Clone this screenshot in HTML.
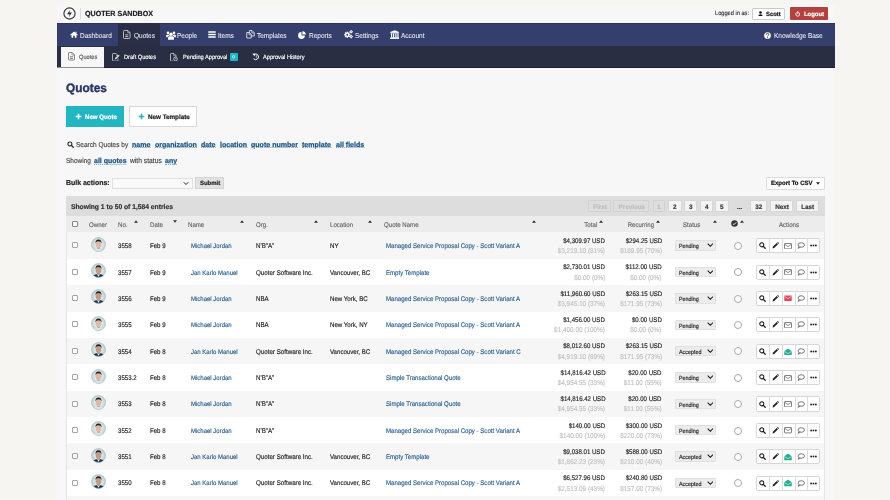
<!DOCTYPE html>
<html><head><meta charset="utf-8"><style>
html,body{margin:0;padding:0;width:890px;height:500px;overflow:hidden;background:#f6f5f1;}
body{position:relative;font-family:"Liberation Sans",sans-serif;}
.b{position:absolute;line-height:0}
.t{position:absolute;white-space:nowrap;line-height:10px;height:10px;font-size:6.1px;color:#222;-webkit-text-stroke:0.15px currentColor;text-rendering:geometricPrecision}
.bold{font-weight:bold;-webkit-text-stroke:0.2px currentColor}
.lnk{font-weight:bold;color:#1c5787;-webkit-text-stroke:0.25px currentColor}
.lnk::after{content:"";position:absolute;left:0;right:0;bottom:1.3px;border-bottom:0.8px dotted #7fa6c6}
svg{display:block}
#root{position:absolute;left:0;top:0;width:890px;height:500px;will-change:transform;filter:blur(0.3px)}
</style></head><body>
<div id="root">
<div class="b" style="left:57px;top:5px;width:778px;height:495px;background:#f7f7f7"></div>
<div class="b" style="left:62.8px;top:6.6px;width:13px;height:13px"><svg width="13" height="13" viewBox="0 0 26 26"><circle cx="13" cy="13" r="11.2" fill="none" stroke="#333" stroke-width="2.3"/><path d="M14.5 5.5 L12.5 11 L17.8 11 L11.5 20.5 L13.2 14.6 L8 14.6 Z" fill="#2a2a2a"/></svg></div>
<div class="b" style="left:80.2px;top:7.6px;width:0.7999999999999972px;height:11.799999999999999px;background:#dadada"></div>
<div class="t bold" style="left:85.00px;top:9.30px;font-size:7.42px;color:#222;letter-spacing:0.000px;transform:scaleX(0.9615);transform-origin:left center">QUOTER SANDBOX</div>
<div class="t " style="left:715.00px;top:8.80px;font-size:6.23px;color:#333;letter-spacing:0.000px;transform:scaleX(0.9091);transform-origin:left center">Logged in as:</div>
<div class="b" style="left:752px;top:7.5px;width:33px;height:12.5px;background:#fff;border:1px solid #ccc;box-sizing:border-box;border-radius:1px"></div>
<div class="b" style="left:757.5px;top:10.8px"><svg width="5" height="5.6" viewBox="0 0 10 11"><circle cx="5" cy="3" r="2.6" fill="#111"/><path d="M0.6 11 Q0.6 6.2 5 6.2 Q9.4 6.2 9.4 11Z" fill="#111"/></svg></div>
<div class="t bold" style="left:765.50px;top:9.60px;font-size:6.14px;color:#111;letter-spacing:0.000px;transform:scaleX(0.9615);transform-origin:left center">Scott</div>
<div class="b" style="left:789.7px;top:7.2px;width:38.39999999999998px;height:12.8px;background:#b3423e;border-radius:1px"></div>
<div class="b" style="left:794.8px;top:10.9px"><svg width="5.6" height="5.8" viewBox="0 0 12 12.4"><path d="M3.4 3.3 A4.3 4.3 0 1 0 8.6 3.3" fill="none" stroke="#fff" stroke-width="1.9" stroke-linecap="round"/><path d="M6 1 V5.8" stroke="#fff" stroke-width="1.9" stroke-linecap="round"/></svg></div>
<div class="t bold" style="left:803.50px;top:9.60px;font-size:6.14px;color:#fff;letter-spacing:0.000px;transform:scaleX(0.9615);transform-origin:left center">Logout</div>
<div class="b" style="left:57px;top:23px;width:778px;height:23px;background:#343f6d"></div>
<div class="b" style="left:57px;top:23px;width:778px;height:1px;background:#2c355c"></div>
<div class="b" style="left:117.8px;top:23px;width:42.000000000000014px;height:23px;background:#2a2f47"></div>
<div class="b" style="left:69.6px;top:31px"><svg width="8" height="7" viewBox="0 0 16 14"><path d="M8 0.8 L15.6 7.6 L14.4 8.8 L13 7.6 V13.6 H9.6 V9.6 H6.4 V13.6 H3 V7.6 L1.6 8.8 L0.4 7.6 Z" fill="#fff"/><rect x="11" y="1.5" width="2" height="3.5" fill="#fff"/></svg></div>
<div class="t " style="left:79.80px;top:30.90px;font-size:7.15px;color:#f0f0f4;-webkit-text-stroke:0.05px #f0f0f4;letter-spacing:0.000px;transform:scaleX(0.9091);transform-origin:left center">Dashboard</div>
<div class="b" style="left:123px;top:30px"><svg width="8" height="9" viewBox="0 0 16 18"><path d="M2.5 1 H10 L14 5 V15.5 Q14 17 12.5 17 H2.5 Q1 17 1 15.5 V2.5 Q1 1 2.5 1 Z" fill="none" stroke="#d8d8de" stroke-width="1.6"/><path d="M9.5 1.5 V5.5 H13.5" fill="none" stroke="#d8d8de" stroke-width="1.3"/><path d="M4.5 9.8 H10.5 M4.5 13.3 H10.5" stroke="#d8d8de" stroke-width="1.7"/></svg></div>
<div class="t " style="left:134.00px;top:30.90px;font-size:7.15px;color:#f0f0f4;-webkit-text-stroke:0.05px #f0f0f4;letter-spacing:0.000px;transform:scaleX(0.9091);transform-origin:left center">Quotes</div>
<div class="b" style="left:165.8px;top:30.5px"><svg width="10" height="9" viewBox="0 0 20 18"><circle cx="10" cy="6.5" r="3.4" fill="#fff"/><circle cx="4" cy="3.8" r="2.6" fill="#fff"/><circle cx="16" cy="3.8" r="2.6" fill="#fff"/><path d="M4 17.5 V13.5 Q4 10.5 7 10.5 H13 Q16 10.5 16 13.5 V17.5Z" fill="#fff"/><path d="M0.3 12.5 V9.5 Q0.3 7.3 2.5 7.3 H5.5 Q6.3 8.5 7 9.6 Q3.2 10.2 3 12.5Z M19.7 12.5 V9.5 Q19.7 7.3 17.5 7.3 H14.5 Q13.7 8.5 13 9.6 Q16.8 10.2 17 12.5Z" fill="#fff"/></svg></div>
<div class="t " style="left:176.50px;top:30.90px;font-size:7.15px;color:#f0f0f4;-webkit-text-stroke:0.05px #f0f0f4;letter-spacing:0.000px;transform:scaleX(0.9091);transform-origin:left center">People</div>
<div class="b" style="left:208px;top:31.3px"><svg width="8" height="7" viewBox="0 0 16 14"><rect x="0.5" y="0.6" width="15" height="2.8" rx="0.6" fill="#fff"/><rect x="0.5" y="5.6" width="15" height="2.8" rx="0.6" fill="#fff"/><rect x="0.5" y="10.6" width="15" height="2.8" rx="0.6" fill="#fff"/></svg></div>
<div class="t " style="left:218.30px;top:30.90px;font-size:7.15px;color:#f0f0f4;-webkit-text-stroke:0.05px #f0f0f4;letter-spacing:0.000px;transform:scaleX(0.9091);transform-origin:left center">Items</div>
<div class="b" style="left:246.4px;top:30.4px"><svg width="9" height="8.5" viewBox="0 0 18 17"><path d="M7 1 H12 L16.5 5.5 V12 H7 Z" fill="#343f6d" stroke="#fff" stroke-width="1.5" stroke-linejoin="round"/><path d="M11.5 1.3 V6 H16.2" fill="none" stroke="#fff" stroke-width="1.2"/><path d="M1.5 5 H6.5 L10.5 9 V16 H1.5 Z" fill="#343f6d" stroke="#fff" stroke-width="1.5" stroke-linejoin="round"/><path d="M6 5.3 V9.5 H10.2" fill="none" stroke="#fff" stroke-width="1.2"/></svg></div>
<div class="t " style="left:257.40px;top:30.90px;font-size:7.15px;color:#f0f0f4;-webkit-text-stroke:0.05px #f0f0f4;letter-spacing:0.000px;transform:scaleX(0.9091);transform-origin:left center">Templates</div>
<div class="b" style="left:298.4px;top:30.6px"><svg width="8" height="8" viewBox="0 0 16 16"><path d="M7 2.2 A6.8 6.8 0 1 0 13.8 9 H7 Z" fill="#fff"/><path d="M8.8 0.3 A7 7 0 0 1 15.7 7.2 H8.8Z" fill="#fff"/></svg></div>
<div class="t " style="left:309.20px;top:30.90px;font-size:7.15px;color:#f0f0f4;-webkit-text-stroke:0.05px #f0f0f4;letter-spacing:0.000px;transform:scaleX(0.9091);transform-origin:left center">Reports</div>
<div class="b" style="left:343.5px;top:30.4px"><svg width="9" height="8.5" viewBox="0 0 18 17"><g fill="#fff"><circle cx="6.5" cy="9.5" r="4.3"/><g transform="translate(6.5 9.5)"><rect x="-1.3" y="-6.2" width="2.6" height="12.4"/><rect x="-1.3" y="-6.2" width="2.6" height="12.4" transform="rotate(45)"/><rect x="-1.3" y="-6.2" width="2.6" height="12.4" transform="rotate(90)"/><rect x="-1.3" y="-6.2" width="2.6" height="12.4" transform="rotate(135)"/></g></g><circle cx="6.5" cy="9.5" r="1.8" fill="#343f6d"/><g fill="#fff"><circle cx="14.3" cy="3.6" r="2.6"/><rect x="13.5" y="0" width="1.6" height="7.2"/><rect x="10.7" y="2.8" width="7.2" height="1.6"/><circle cx="14.3" cy="13.2" r="2.6"/><rect x="13.5" y="9.6" width="1.6" height="7.2"/><rect x="10.7" y="12.4" width="7.2" height="1.6"/></g><circle cx="14.3" cy="3.6" r="1" fill="#343f6d"/><circle cx="14.3" cy="13.2" r="1" fill="#343f6d"/></svg></div>
<div class="t " style="left:354.50px;top:30.90px;font-size:7.15px;color:#f0f0f4;-webkit-text-stroke:0.05px #f0f0f4;letter-spacing:0.000px;transform:scaleX(0.9091);transform-origin:left center">Settings</div>
<div class="b" style="left:389.8px;top:30px"><svg width="9.5" height="9" viewBox="0 0 19 18"><path d="M9.5 0.5 L18.5 4.2 V5.3 H0.5 V4.2Z" fill="#fff"/><rect x="0.5" y="5.3" width="18" height="1.3" fill="#fff"/><rect x="2" y="6.6" width="2.4" height="7.6" fill="#fff"/><rect x="6" y="6.6" width="2.4" height="7.6" fill="#fff"/><rect x="10.6" y="6.6" width="2.4" height="7.6" fill="#fff"/><rect x="14.6" y="6.6" width="2.4" height="7.6" fill="#fff"/><rect x="1" y="14.2" width="17" height="1.6" fill="#fff"/><rect x="0" y="15.8" width="19" height="2" fill="#fff"/></svg></div>
<div class="t " style="left:400.90px;top:30.90px;font-size:7.15px;color:#f0f0f4;-webkit-text-stroke:0.05px #f0f0f4;letter-spacing:0.000px;transform:scaleX(0.9091);transform-origin:left center">Account</div>
<div class="b" style="left:763.6px;top:31.8px"><svg width="7" height="7" viewBox="0 0 14 14"><circle cx="7" cy="7" r="6.7" fill="#fff"/><path d="M4.6 5.4 Q4.6 2.9 7 2.9 Q9.5 2.9 9.5 5 Q9.5 6.3 8 7 Q7.1 7.5 7.1 8.7" fill="none" stroke="#343f6d" stroke-width="1.9"/><circle cx="7.1" cy="10.9" r="1.1" fill="#343f6d"/></svg></div>
<div class="t " style="left:773.70px;top:30.90px;font-size:7.15px;color:#f0f0f4;-webkit-text-stroke:0.05px #f0f0f4;letter-spacing:0.000px;transform:scaleX(0.9091);transform-origin:left center">Knowledge Base</div>
<div class="b" style="left:57px;top:46px;width:778px;height:21.5px;background:#292e42"></div>
<div class="b" style="left:57px;top:66.5px;width:778px;height:1.0px;background:#1c1f30"></div>
<div class="b" style="left:61.4px;top:46.5px;width:42.300000000000004px;height:20.099999999999994px;background:#f7f7f7"></div>
<div class="b" style="left:57px;top:66.6px;width:47px;height:1.0px;background:#8e919c"></div>
<div class="b" style="left:68px;top:52.4px"><svg width="7" height="8.5" viewBox="0 0 14 17"><path d="M2.3 1 H8.5 L13 5.5 V14.7 Q13 16 11.7 16 H2.3 Q1 16 1 14.7 V2.3 Q1 1 2.3 1Z" fill="none" stroke="#666" stroke-width="1.5"/><path d="M8 1.3 V6 H12.7" fill="none" stroke="#666" stroke-width="1.2"/><path d="M4 9.5 H10 M4 12.8 H10" stroke="#666" stroke-width="1.6"/></svg></div>
<div class="t " style="left:78.90px;top:53.00px;font-size:6.22px;color:#555;letter-spacing:0.000px;transform:scaleX(0.9091);transform-origin:left center">Quotes</div>
<div class="b" style="left:111.6px;top:52.5px"><svg width="8" height="8.5" viewBox="0 0 16 17"><path d="M9.5 4 V5.5 L12 5.5 M12 11 V14.7 Q12 16 10.7 16 H2.3 Q1 16 1 14.7 V2.3 Q1 1 2.3 1 H8 L12 5 V6" fill="none" stroke="#ddd" stroke-width="1.5"/><path d="M5.5 13 L6.3 10 L13 3.3 L15.2 5.5 L8.5 12.2Z" fill="#ddd"/></svg></div>
<div class="t " style="left:123.60px;top:53.00px;font-size:6.22px;color:#fff;letter-spacing:0.000px;transform:scaleX(0.9091);transform-origin:left center">Draft Quotes</div>
<div class="b" style="left:170.2px;top:52.5px"><svg width="8" height="8.5" viewBox="0 0 16 17"><path d="M6 16 H2.3 Q1 16 1 14.7 V2.3 Q1 1 2.3 1 H8 L12 5 V8.5" fill="none" stroke="#ddd" stroke-width="1.5"/><path d="M7.5 1.3 V5.5 H11.7" fill="none" stroke="#ddd" stroke-width="1.1"/><circle cx="11" cy="12" r="3.7" fill="none" stroke="#ddd" stroke-width="1.5"/><path d="M11 10.3 V12.2 H12.6" fill="none" stroke="#ddd" stroke-width="1"/></svg></div>
<div class="t " style="left:182.60px;top:53.00px;font-size:6.22px;color:#fff;letter-spacing:0.000px;transform:scaleX(0.9091);transform-origin:left center">Pending Approval</div>
<div class="b" style="left:230.1px;top:53px;width:7.700000000000017px;height:8px;background:#1fb6c6;border-radius:1px"></div>
<div class="b" style="left:232.4px;top:55.2px"><svg width="3.2" height="3.6" viewBox="0 0 6 7"><ellipse cx="3" cy="3.5" rx="2.1" ry="2.6" fill="none" stroke="#fff" stroke-width="1.3"/></svg></div>
<div class="b" style="left:251.8px;top:53px"><svg width="7.5" height="7.5" viewBox="0 0 15 15"><path d="M4 3.2 A5.6 5.6 0 1 1 3.2 11.3" fill="none" stroke="#fff" stroke-width="2"/><path d="M0.6 1.6 L6.2 1.2 L5.2 6.6Z" fill="#fff"/><path d="M8.5 4.5 V8 L10.5 9.5" fill="none" stroke="#fff" stroke-width="1.4"/></svg></div>
<div class="t " style="left:263.00px;top:53.00px;font-size:6.22px;color:#fff;letter-spacing:0.000px;transform:scaleX(0.9091);transform-origin:left center">Approval History</div>
<div class="t bold" style="left:65.80px;top:82.90px;font-size:12.20px;color:#2a3567;-webkit-text-stroke:0.4px #2a3567;letter-spacing:0.000px;transform:scaleX(0.9754);transform-origin:left center">Quotes</div>
<div class="b" style="left:66px;top:106px;width:58px;height:21px;background:#22b6c2"></div>
<div class="b" style="left:75px;top:113px"><svg width="7" height="7" viewBox="0 0 14 14"><path d="M7 1.3 V12.7 M1.3 7 H12.7" stroke="#fff" stroke-width="3.2"/></svg></div>
<div class="t bold" style="left:84.80px;top:112.80px;font-size:6.38px;color:#fff;letter-spacing:0.000px;transform:scaleX(0.9615);transform-origin:left center">New Quote</div>
<div class="b" style="left:129.3px;top:106px;width:67.39999999999998px;height:21px;background:#fff;border:1px solid #d8d8d8;box-sizing:border-box"></div>
<div class="b" style="left:137.5px;top:113px"><svg width="7" height="7" viewBox="0 0 14 14"><path d="M7 1.3 V12.7 M1.3 7 H12.7" stroke="#22b6c2" stroke-width="3.2"/></svg></div>
<div class="t bold" style="left:147.80px;top:112.80px;font-size:6.54px;color:#222;letter-spacing:0.000px;transform:scaleX(0.9615);transform-origin:left center">New Template</div>
<div class="b" style="left:66.6px;top:141.4px"><svg width="7" height="7" viewBox="0 0 14 14"><circle cx="5.8" cy="5.8" r="4" fill="none" stroke="#222" stroke-width="2.1"/><path d="M8.8 8.8 L12.6 12.6" stroke="#222" stroke-width="2.6" stroke-linecap="round"/></svg></div>
<div class="t " style="left:76.30px;top:139.50px;font-size:7.18px;color:#444;letter-spacing:0.000px;transform:scaleX(0.9091);transform-origin:left center">Search Quotes by</div>
<div class="t lnk" style="left:131.90px;top:139.50px;font-size:7.19px;letter-spacing:0.000px;transform:scaleX(0.9804);transform-origin:left center">name</div>
<div class="t lnk" style="left:154.50px;top:139.50px;font-size:7.19px;letter-spacing:0.000px;transform:scaleX(0.9804);transform-origin:left center">organization</div>
<div class="t lnk" style="left:200.90px;top:139.50px;font-size:7.19px;letter-spacing:0.000px;transform:scaleX(0.9804);transform-origin:left center">date</div>
<div class="t lnk" style="left:220.10px;top:139.50px;font-size:7.19px;letter-spacing:0.000px;transform:scaleX(0.9804);transform-origin:left center">location</div>
<div class="t lnk" style="left:250.50px;top:139.50px;font-size:7.19px;letter-spacing:0.000px;transform:scaleX(0.9804);transform-origin:left center">quote number</div>
<div class="t lnk" style="left:301.70px;top:139.50px;font-size:7.19px;letter-spacing:0.000px;transform:scaleX(0.9804);transform-origin:left center">template</div>
<div class="t lnk" style="left:336.20px;top:139.50px;font-size:7.19px;letter-spacing:0.000px;transform:scaleX(0.9804);transform-origin:left center">all fields</div>
<div class="t " style="left:65.50px;top:156.30px;font-size:7.14px;color:#444;letter-spacing:0.000px;transform:scaleX(0.9091);transform-origin:left center">Showing</div>
<div class="t lnk" style="left:94.10px;top:156.30px;font-size:7.12px;letter-spacing:0.000px;transform:scaleX(0.9804);transform-origin:left center">all quotes</div>
<div class="t " style="left:129.70px;top:156.30px;font-size:7.43px;color:#444;letter-spacing:0.000px;transform:scaleX(0.9091);transform-origin:left center">with status</div>
<div class="t lnk" style="left:165.30px;top:156.30px;font-size:7.12px;letter-spacing:0.000px;transform:scaleX(0.9804);transform-origin:left center">any</div>
<div class="t bold" style="left:66.00px;top:178.00px;font-size:7.22px;color:#222;letter-spacing:0.000px;transform:scaleX(0.9615);transform-origin:left center">Bulk actions:</div>
<div class="b" style="left:112.3px;top:177.6px;width:80.39999999999999px;height:11.300000000000011px;background:#f9f9f9;border:1px solid #e0e0e0;box-sizing:border-box"></div>
<div class="b" style="left:183px;top:181px"><svg width="6" height="5" viewBox="0 0 12 10"><path d="M1.5 2.5 L6 7 L10.5 2.5" fill="none" stroke="#222" stroke-width="2"/></svg></div>
<div class="b" style="left:195px;top:176.7px;width:29.19999999999999px;height:12.600000000000023px;background:#e2e2e2;border:1px solid #d5d5d5;box-sizing:border-box"></div>
<div class="t bold" style="left:199.50px;top:179.00px;font-size:6.20px;color:#222;letter-spacing:0.000px;transform:scaleX(0.9615);transform-origin:left center">Submit</div>
<div class="b" style="left:766.4px;top:177px;width:58.80000000000007px;height:12.5px;background:#fff;border:1px solid #dcdcdc;box-sizing:border-box;border-radius:1px"></div>
<div class="t bold" style="left:770.80px;top:179.20px;font-size:6.24px;color:#111;letter-spacing:0.000px;transform:scaleX(0.9615);transform-origin:left center">Export To CSV</div>
<div class="b" style="left:815.5px;top:182px"><svg width="4" height="3" viewBox="0 0 8 5"><path d="M0 0 H8 L4 5Z" fill="#222"/></svg></div>
<div class="b" style="left:66.4px;top:196px;width:758.4px;height:304px;background:#f5f5f5;border-left:1px solid #e6e6e6;border-right:1px solid #e6e6e6;box-sizing:border-box"></div>
<div class="b" style="left:66.4px;top:196px;width:758.4px;height:19.5px;background:#dddddd"></div>
<div class="t bold" style="left:71.20px;top:202.50px;font-size:6.99px;color:#333;letter-spacing:0.000px;transform:scaleX(0.9615);transform-origin:left center">Showing 1 to 50 of 1,584 entries</div>
<div class="b" style="left:587.9px;top:199.8px;width:22.899999999999977px;height:12.699999999999989px;background:#dedede;border:1px solid #d2d2d2;box-sizing:border-box;border-radius:1px"></div>
<div class="t bold" style="left:592.52px;top:202.60px;font-size:6.55px;color:#bdbdbd;letter-spacing:0.000px;transform:scaleX(0.9615);transform-origin:center center">First</div>
<div class="b" style="left:613.2px;top:199.8px;width:36.09999999999991px;height:12.699999999999989px;background:#dedede;border:1px solid #d2d2d2;box-sizing:border-box;border-radius:1px"></div>
<div class="t bold" style="left:617.94px;top:202.60px;font-size:6.55px;color:#bdbdbd;letter-spacing:0.000px;transform:scaleX(0.9615);transform-origin:center center">Previous</div>
<div class="b" style="left:652.5px;top:199.8px;width:12.799999999999955px;height:12.699999999999989px;background:#dedede;border:1px solid #d2d2d2;box-sizing:border-box;border-radius:1px"></div>
<div class="t bold" style="left:657.15px;top:202.60px;font-size:6.55px;color:#bdbdbd;letter-spacing:0.000px;transform:scaleX(0.9615);transform-origin:center center">1</div>
<div class="b" style="left:668.0px;top:199.8px;width:13.600000000000023px;height:12.699999999999989px;background:#f3f3f3;border:1px solid #d6d6d6;box-sizing:border-box;border-radius:1px"></div>
<div class="t bold" style="left:673.05px;top:202.60px;font-size:6.55px;color:#3a3a3a;letter-spacing:0.000px;transform:scaleX(0.9615);transform-origin:center center">2</div>
<div class="b" style="left:684.0px;top:199.8px;width:13.100000000000023px;height:12.699999999999989px;background:#f3f3f3;border:1px solid #d6d6d6;box-sizing:border-box;border-radius:1px"></div>
<div class="t bold" style="left:688.80px;top:202.60px;font-size:6.55px;color:#3a3a3a;letter-spacing:0.000px;transform:scaleX(0.9615);transform-origin:center center">3</div>
<div class="b" style="left:699.5px;top:199.8px;width:13.600000000000023px;height:12.699999999999989px;background:#f3f3f3;border:1px solid #d6d6d6;box-sizing:border-box;border-radius:1px"></div>
<div class="t bold" style="left:704.55px;top:202.60px;font-size:6.55px;color:#3a3a3a;letter-spacing:0.000px;transform:scaleX(0.9615);transform-origin:center center">4</div>
<div class="b" style="left:715.2px;top:199.8px;width:13.599999999999909px;height:12.699999999999989px;background:#f3f3f3;border:1px solid #d6d6d6;box-sizing:border-box;border-radius:1px"></div>
<div class="t bold" style="left:720.25px;top:202.60px;font-size:6.55px;color:#3a3a3a;letter-spacing:0.000px;transform:scaleX(0.9615);transform-origin:center center">5</div>
<div class="b" style="left:750.0px;top:199.8px;width:17.299999999999955px;height:12.699999999999989px;background:#f3f3f3;border:1px solid #d6d6d6;box-sizing:border-box;border-radius:1px"></div>
<div class="t bold" style="left:755.15px;top:202.60px;font-size:6.55px;color:#3a3a3a;letter-spacing:0.000px;transform:scaleX(0.9615);transform-origin:center center">32</div>
<div class="b" style="left:769.9px;top:199.8px;width:23.5px;height:12.699999999999989px;background:#f3f3f3;border:1px solid #d6d6d6;box-sizing:border-box;border-radius:1px"></div>
<div class="t bold" style="left:774.82px;top:202.60px;font-size:6.55px;color:#3a3a3a;letter-spacing:0.000px;transform:scaleX(0.9615);transform-origin:center center">Next</div>
<div class="b" style="left:796.4px;top:199.8px;width:22.300000000000068px;height:12.699999999999989px;background:#f3f3f3;border:1px solid #d6d6d6;box-sizing:border-box;border-radius:1px"></div>
<div class="t bold" style="left:801.07px;top:202.60px;font-size:6.55px;color:#3a3a3a;letter-spacing:0.000px;transform:scaleX(0.9615);transform-origin:center center">Last</div>
<div class="t bold" style="left:736.50px;top:202.50px;font-size:6.55px;color:#333;letter-spacing:0.000px;transform:scaleX(0.9615);transform-origin:left center">...</div>
<div class="b" style="left:66.4px;top:215.5px;width:758.4px;height:17.099999999999994px;background:#ececec"></div>
<div class="b" style="left:72px;top:220.8px;width:6px;height:6.0px;background:#fff;border:1px solid #888;box-sizing:border-box;border-radius:1px"></div>
<div class="t " style="left:89.30px;top:221.10px;color:#666;font-size:6.71px;letter-spacing:0.000px;transform:scaleX(0.9091);transform-origin:left center">Owner</div>
<div class="t " style="left:118.30px;top:221.10px;color:#666;font-size:6.71px;letter-spacing:0.000px;transform:scaleX(0.9091);transform-origin:left center">No.</div>
<div class="t " style="left:149.70px;top:221.10px;color:#666;font-size:6.71px;letter-spacing:0.000px;transform:scaleX(0.9091);transform-origin:left center">Date</div>
<div class="t " style="left:188.00px;top:221.10px;color:#666;font-size:6.71px;letter-spacing:0.000px;transform:scaleX(0.9091);transform-origin:left center">Name</div>
<div class="t " style="left:255.50px;top:221.10px;color:#666;font-size:6.71px;letter-spacing:0.000px;transform:scaleX(0.9091);transform-origin:left center">Org.</div>
<div class="t " style="left:330.00px;top:221.10px;color:#666;font-size:6.71px;letter-spacing:0.000px;transform:scaleX(0.9091);transform-origin:left center">Location</div>
<div class="t " style="left:384.00px;top:221.10px;color:#666;font-size:6.71px;letter-spacing:0.000px;transform:scaleX(0.9091);transform-origin:left center">Quote Name</div>
<div class="t " style="right:292.50px;top:221.10px;color:#666;font-size:6.71px;letter-spacing:0.000px;transform:scaleX(0.9091);transform-origin:right center">Total</div>
<div class="t " style="right:235.60px;top:221.10px;color:#666;font-size:6.71px;letter-spacing:0.000px;transform:scaleX(0.9091);transform-origin:right center">Recurring</div>
<div class="t " style="left:682.70px;top:221.10px;color:#666;font-size:6.71px;letter-spacing:0.000px;transform:scaleX(0.9091);transform-origin:left center">Status</div>
<div class="t " style="left:778.20px;top:221.10px;color:#666;font-size:6.71px;letter-spacing:0.000px;transform:scaleX(0.9091);transform-origin:center center">Actions</div>
<div class="b" style="left:134.2px;top:219.9px"><svg width="4" height="3" viewBox="0 0 8 5"><path d="M0 5 H8 L4 0Z" fill="#333"/></svg></div>
<div class="b" style="left:172.6px;top:219.9px"><svg width="4" height="3" viewBox="0 0 8 5"><path d="M0 0 H8 L4 5Z" fill="#333"/></svg></div>
<div class="b" style="left:240.3px;top:219.9px"><svg width="4" height="3" viewBox="0 0 8 5"><path d="M0 5 H8 L4 0Z" fill="#333"/></svg></div>
<div class="b" style="left:314px;top:219.9px"><svg width="4" height="3" viewBox="0 0 8 5"><path d="M0 5 H8 L4 0Z" fill="#333"/></svg></div>
<div class="b" style="left:367.9px;top:219.9px"><svg width="4" height="3" viewBox="0 0 8 5"><path d="M0 5 H8 L4 0Z" fill="#333"/></svg></div>
<div class="b" style="left:532.4px;top:219.9px"><svg width="4" height="3" viewBox="0 0 8 5"><path d="M0 5 H8 L4 0Z" fill="#333"/></svg></div>
<div class="b" style="left:598.7px;top:219.9px"><svg width="4" height="3" viewBox="0 0 8 5"><path d="M0 5 H8 L4 0Z" fill="#333"/></svg></div>
<div class="b" style="left:655.5px;top:219.9px"><svg width="4" height="3" viewBox="0 0 8 5"><path d="M0 5 H8 L4 0Z" fill="#333"/></svg></div>
<div class="b" style="left:713px;top:219.9px"><svg width="4" height="3" viewBox="0 0 8 5"><path d="M0 5 H8 L4 0Z" fill="#333"/></svg></div>
<div class="b" style="left:740.4px;top:219.9px"><svg width="4" height="3" viewBox="0 0 8 5"><path d="M0 5 H8 L4 0Z" fill="#333"/></svg></div>
<div class="b" style="left:730.5px;top:220px"><svg width="7" height="7" viewBox="0 0 14 14"><circle cx="7" cy="7" r="6.5" fill="#333"/><path d="M3.8 7.2 L6 9.4 L10.3 4.8" fill="none" stroke="#fff" stroke-width="1.8"/></svg></div>
<div class="b" style="left:67.4px;top:232.45px;width:756.4px;height:26.370000000000005px;background:#f6f6f6"></div>
<div class="b" style="left:72px;top:242.34999999999997px;width:6px;height:6.0px;background:#fff;border:1px solid #a5a5a5;box-sizing:border-box;border-radius:1px"></div>
<div class="b" style="left:90.9px;top:236.74999999999997px"><svg width="15" height="15" viewBox="0 0 30 30"><defs><radialGradient id="bg0m" cx="50%" cy="50%" r="50%"><stop offset="0.35" stop-color="#f0f2f2"/><stop offset="1" stop-color="#c4cacc"/></radialGradient><clipPath id="cp0m"><circle cx="15" cy="15" r="13.8"/></clipPath></defs><circle cx="15" cy="15" r="14" fill="url(#bg0m)"/><g clip-path="url(#cp0m)"><path d="M3 31 Q4 24 11 23 H19 Q26 24 27 31Z" fill="#dde4ec"/><rect x="12.5" y="19" width="5" height="5" fill="#cfa890"/><ellipse cx="15" cy="14.3" rx="6" ry="7.4" fill="#dcbba6"/><path d="M8.9 12.5 Q8.5 5 15 4.8 Q21.5 5 21.1 12.5 Q20.3 8.8 15 8.6 Q9.7 8.8 8.9 12.5Z" fill="#2a2420"/></g><circle cx="15" cy="15" r="14" fill="none" stroke="#8ecbd0" stroke-width="1.3"/></svg></div>
<div class="t " style="left:118.30px;top:242.15px;color:#222;font-size:6.71px;letter-spacing:0.000px;transform:scaleX(0.9091);transform-origin:left center">3558</div>
<div class="t " style="left:149.70px;top:242.15px;color:#222;font-size:6.71px;letter-spacing:0.000px;transform:scaleX(0.9091);transform-origin:left center">Feb 9</div>
<div class="t " style="left:190.80px;top:242.15px;color:#2a5f8f;font-size:6.60px;letter-spacing:0.000px;transform:scaleX(0.9091);transform-origin:left center">Michael Jordan</div>
<div class="t " style="left:255.50px;top:242.15px;color:#222;font-size:6.82px;letter-spacing:0.000px;transform:scaleX(0.9091);transform-origin:left center">N&#39;B"A"</div>
<div class="t " style="left:329.60px;top:242.15px;color:#222;font-size:6.71px;letter-spacing:0.000px;transform:scaleX(0.9091);transform-origin:left center">NY</div>
<div class="t " style="left:386.40px;top:242.15px;color:#2a5f8f;font-size:6.69px;letter-spacing:0.000px;transform:scaleX(0.9091);transform-origin:left center">Managed Service Proposal Copy - Scott Variant A</div>
<div class="t " style="right:284.90px;top:236.95px;color:#222;font-size:6.71px;letter-spacing:0.000px;transform:scaleX(0.9091);transform-origin:right center">$4,309.97 USD</div>
<div class="t " style="right:284.90px;top:247.25px;color:#c2c2c2;font-size:7.04px;letter-spacing:0.000px;transform:scaleX(0.9091);transform-origin:right center">$3,219.10 (81%)</div>
<div class="t " style="right:228.20px;top:236.95px;color:#222;font-size:6.71px;letter-spacing:0.000px;transform:scaleX(0.9091);transform-origin:right center">$294.25 USD</div>
<div class="t " style="right:228.20px;top:247.25px;color:#c2c2c2;font-size:7.04px;letter-spacing:0.000px;transform:scaleX(0.9091);transform-origin:right center">$189.95 (70%)</div>
<div class="b" style="left:675px;top:240.45px;width:40.799999999999955px;height:10.399999999999977px;background:#ececec;border:1px solid #e0e0e0;box-sizing:border-box;border-radius:1px"></div>
<div class="t " style="left:679.00px;top:242.45px;color:#1a1a1a;font-size:6.00px;letter-spacing:0.000px;transform:scaleX(0.9000);transform-origin:left center">Pending</div>
<div class="b" style="left:706.7px;top:243.34999999999997px"><svg width="6.6" height="4.2" viewBox="0 0 13 8"><path d="M1.3 1.3 L6.5 6.3 L11.7 1.3" fill="none" stroke="#151515" stroke-width="2"/></svg></div>
<div class="b" style="left:733.9px;top:241.95px;width:8px;height:8px;border:1px solid #aaa;border-radius:50%;box-sizing:border-box;background:#fff"></div>
<div class="b" style="left:756.3px;top:238.24999999999997px;width:63.80000000000007px;height:15.099999999999994px;background:#fff;border:1px solid #d6d6d6;box-sizing:border-box;border-radius:1.5px"></div>
<div class="b" style="left:769.06px;top:238.24999999999997px;width:0.7000000000000455px;height:15.099999999999994px;background:#dcdcdc"></div>
<div class="b" style="left:781.8199999999999px;top:238.24999999999997px;width:0.7000000000000455px;height:15.099999999999994px;background:#dcdcdc"></div>
<div class="b" style="left:794.5799999999999px;top:238.24999999999997px;width:0.7000000000000455px;height:15.099999999999994px;background:#dcdcdc"></div>
<div class="b" style="left:807.3399999999999px;top:238.24999999999997px;width:0.7000000000000455px;height:15.099999999999994px;background:#dcdcdc"></div>
<div class="b" style="left:759.18px;top:242.34999999999997px;line-height:0"><svg width="7" height="7" viewBox="0 0 14 14"><circle cx="5.6" cy="5.6" r="4.1" fill="none" stroke="#1a1a1a" stroke-width="2.1"/><path d="M8.7 8.7 L12.4 12.4" stroke="#1a1a1a" stroke-width="2.6" stroke-linecap="round"/></svg></div>
<div class="b" style="left:771.9399999999999px;top:242.34999999999997px;line-height:0"><svg width="7" height="7" viewBox="0 0 14 14"><path d="M1.2 12.8 L1.8 9.6 L9.4 2 L12 4.6 L4.4 12.2 Z" fill="#1f1f1f"/><path d="M10.2 1.2 L11 0.4 Q11.6 -0.1 12.2 0.5 L13.5 1.8 Q14.1 2.4 13.6 3 L12.8 3.8Z" fill="#1f1f1f"/></svg></div>
<div class="b" style="left:784.1999999999999px;top:242.64999999999998px;line-height:0"><svg width="8" height="6.4" viewBox="0 0 16 12.8"><rect x="1" y="1" width="14" height="10.8" rx="1.4" fill="none" stroke="#555" stroke-width="1.5"/><path d="M1.5 2.5 L8 7.3 L14.5 2.5" fill="none" stroke="#555" stroke-width="1.4"/></svg></div>
<div class="b" style="left:796.9599999999999px;top:242.34999999999997px;line-height:0"><svg width="8" height="7" viewBox="0 0 16 14"><ellipse cx="8.5" cy="6" rx="6.4" ry="4.5" fill="none" stroke="#333" stroke-width="1.3"/><path d="M4 9.2 L2.2 12.8 L6.8 10.3" fill="#fff" stroke="#333" stroke-width="1.2"/></svg></div>
<div class="b" style="left:810.2199999999999px;top:244.34999999999997px;line-height:0"><svg width="7" height="3" viewBox="0 0 14 6"><rect x="0.6" y="1.4" width="3.4" height="3.2" fill="#1f1f1f"/><rect x="5.3" y="1.4" width="3.4" height="3.2" fill="#1f1f1f"/><rect x="10" y="1.4" width="3.4" height="3.2" fill="#1f1f1f"/></svg></div>
<div class="b" style="left:67.4px;top:258.82px;width:756.4px;height:26.370000000000005px;background:#ffffff"></div>
<div class="b" style="left:72px;top:268.71999999999997px;width:6px;height:6.0px;background:#fff;border:1px solid #a5a5a5;box-sizing:border-box;border-radius:1px"></div>
<div class="b" style="left:90.9px;top:263.12px"><svg width="15" height="15" viewBox="0 0 30 30"><defs><radialGradient id="bg1j" cx="50%" cy="50%" r="50%"><stop offset="0.35" stop-color="#eef0f1"/><stop offset="1" stop-color="#c0c6c9"/></radialGradient><clipPath id="cp1j"><circle cx="15" cy="15" r="13.8"/></clipPath></defs><circle cx="15" cy="15" r="14" fill="url(#bg1j)"/><g clip-path="url(#cp1j)"><path d="M2 31 Q3 24 10.5 22.5 H19.5 Q27 24 28 31Z" fill="#1c2d4e"/><path d="M12 22.5 L15 28 L18 22.5Z" fill="#e9eef3"/><rect x="12.5" y="18.5" width="5" height="4.5" fill="#b08870"/><ellipse cx="15" cy="14" rx="5.9" ry="7.3" fill="#c29c84"/><path d="M9 12 Q8.6 4.6 15 4.5 Q21.4 4.6 21 12 Q20.2 8.2 15 8 Q9.8 8.2 9 12Z" fill="#2a211c"/></g><circle cx="15" cy="15" r="14" fill="none" stroke="#8ecbd0" stroke-width="1.3"/></svg></div>
<div class="t " style="left:118.30px;top:268.52px;color:#222;font-size:6.71px;letter-spacing:0.000px;transform:scaleX(0.9091);transform-origin:left center">3557</div>
<div class="t " style="left:149.70px;top:268.52px;color:#222;font-size:6.71px;letter-spacing:0.000px;transform:scaleX(0.9091);transform-origin:left center">Feb 9</div>
<div class="t " style="left:190.80px;top:268.52px;color:#2a5f8f;font-size:6.60px;letter-spacing:0.000px;transform:scaleX(0.9091);transform-origin:left center">Jan Karlo Manuel</div>
<div class="t " style="left:255.50px;top:268.52px;color:#222;font-size:6.82px;letter-spacing:0.000px;transform:scaleX(0.9091);transform-origin:left center">Quoter Software Inc.</div>
<div class="t " style="left:329.60px;top:268.52px;color:#222;font-size:6.71px;letter-spacing:0.000px;transform:scaleX(0.9091);transform-origin:left center">Vancouver, BC</div>
<div class="t " style="left:386.40px;top:268.52px;color:#2a5f8f;font-size:6.69px;letter-spacing:0.000px;transform:scaleX(0.9091);transform-origin:left center">Empty Template</div>
<div class="t " style="right:284.90px;top:263.32px;color:#222;font-size:6.71px;letter-spacing:0.000px;transform:scaleX(0.9091);transform-origin:right center">$2,730.01 USD</div>
<div class="t " style="right:284.90px;top:273.62px;color:#c2c2c2;font-size:7.04px;letter-spacing:0.000px;transform:scaleX(0.9091);transform-origin:right center">$0.00 (0%)</div>
<div class="t " style="right:228.20px;top:263.32px;color:#222;font-size:6.71px;letter-spacing:0.000px;transform:scaleX(0.9091);transform-origin:right center">$112.00 USD</div>
<div class="t " style="right:228.20px;top:273.62px;color:#c2c2c2;font-size:7.04px;letter-spacing:0.000px;transform:scaleX(0.9091);transform-origin:right center">$0.00 (0%)</div>
<div class="b" style="left:675px;top:266.82px;width:40.799999999999955px;height:10.399999999999977px;background:#ececec;border:1px solid #e0e0e0;box-sizing:border-box;border-radius:1px"></div>
<div class="t " style="left:679.00px;top:268.82px;color:#1a1a1a;font-size:6.00px;letter-spacing:0.000px;transform:scaleX(0.9000);transform-origin:left center">Pending</div>
<div class="b" style="left:706.7px;top:269.71999999999997px"><svg width="6.6" height="4.2" viewBox="0 0 13 8"><path d="M1.3 1.3 L6.5 6.3 L11.7 1.3" fill="none" stroke="#151515" stroke-width="2"/></svg></div>
<div class="b" style="left:733.9px;top:268.32px;width:8px;height:8px;border:1px solid #aaa;border-radius:50%;box-sizing:border-box;background:#fff"></div>
<div class="b" style="left:756.3px;top:264.62px;width:63.80000000000007px;height:15.099999999999966px;background:#fff;border:1px solid #d6d6d6;box-sizing:border-box;border-radius:1.5px"></div>
<div class="b" style="left:769.06px;top:264.62px;width:0.7000000000000455px;height:15.099999999999966px;background:#dcdcdc"></div>
<div class="b" style="left:781.8199999999999px;top:264.62px;width:0.7000000000000455px;height:15.099999999999966px;background:#dcdcdc"></div>
<div class="b" style="left:794.5799999999999px;top:264.62px;width:0.7000000000000455px;height:15.099999999999966px;background:#dcdcdc"></div>
<div class="b" style="left:807.3399999999999px;top:264.62px;width:0.7000000000000455px;height:15.099999999999966px;background:#dcdcdc"></div>
<div class="b" style="left:759.18px;top:268.71999999999997px;line-height:0"><svg width="7" height="7" viewBox="0 0 14 14"><circle cx="5.6" cy="5.6" r="4.1" fill="none" stroke="#1a1a1a" stroke-width="2.1"/><path d="M8.7 8.7 L12.4 12.4" stroke="#1a1a1a" stroke-width="2.6" stroke-linecap="round"/></svg></div>
<div class="b" style="left:771.9399999999999px;top:268.71999999999997px;line-height:0"><svg width="7" height="7" viewBox="0 0 14 14"><path d="M1.2 12.8 L1.8 9.6 L9.4 2 L12 4.6 L4.4 12.2 Z" fill="#1f1f1f"/><path d="M10.2 1.2 L11 0.4 Q11.6 -0.1 12.2 0.5 L13.5 1.8 Q14.1 2.4 13.6 3 L12.8 3.8Z" fill="#1f1f1f"/></svg></div>
<div class="b" style="left:784.1999999999999px;top:269.02px;line-height:0"><svg width="8" height="6.4" viewBox="0 0 16 12.8"><rect x="1" y="1" width="14" height="10.8" rx="1.4" fill="none" stroke="#555" stroke-width="1.5"/><path d="M1.5 2.5 L8 7.3 L14.5 2.5" fill="none" stroke="#555" stroke-width="1.4"/></svg></div>
<div class="b" style="left:796.9599999999999px;top:268.71999999999997px;line-height:0"><svg width="8" height="7" viewBox="0 0 16 14"><ellipse cx="8.5" cy="6" rx="6.4" ry="4.5" fill="none" stroke="#333" stroke-width="1.3"/><path d="M4 9.2 L2.2 12.8 L6.8 10.3" fill="#fff" stroke="#333" stroke-width="1.2"/></svg></div>
<div class="b" style="left:810.2199999999999px;top:270.71999999999997px;line-height:0"><svg width="7" height="3" viewBox="0 0 14 6"><rect x="0.6" y="1.4" width="3.4" height="3.2" fill="#1f1f1f"/><rect x="5.3" y="1.4" width="3.4" height="3.2" fill="#1f1f1f"/><rect x="10" y="1.4" width="3.4" height="3.2" fill="#1f1f1f"/></svg></div>
<div class="b" style="left:67.4px;top:285.19px;width:756.4px;height:26.370000000000005px;background:#f6f6f6"></div>
<div class="b" style="left:72px;top:295.09px;width:6px;height:6.0px;background:#fff;border:1px solid #a5a5a5;box-sizing:border-box;border-radius:1px"></div>
<div class="b" style="left:90.9px;top:289.49px"><svg width="15" height="15" viewBox="0 0 30 30"><defs><radialGradient id="bg2j" cx="50%" cy="50%" r="50%"><stop offset="0.35" stop-color="#eef0f1"/><stop offset="1" stop-color="#c0c6c9"/></radialGradient><clipPath id="cp2j"><circle cx="15" cy="15" r="13.8"/></clipPath></defs><circle cx="15" cy="15" r="14" fill="url(#bg2j)"/><g clip-path="url(#cp2j)"><path d="M2 31 Q3 24 10.5 22.5 H19.5 Q27 24 28 31Z" fill="#1c2d4e"/><path d="M12 22.5 L15 28 L18 22.5Z" fill="#e9eef3"/><rect x="12.5" y="18.5" width="5" height="4.5" fill="#b08870"/><ellipse cx="15" cy="14" rx="5.9" ry="7.3" fill="#c29c84"/><path d="M9 12 Q8.6 4.6 15 4.5 Q21.4 4.6 21 12 Q20.2 8.2 15 8 Q9.8 8.2 9 12Z" fill="#2a211c"/></g><circle cx="15" cy="15" r="14" fill="none" stroke="#8ecbd0" stroke-width="1.3"/></svg></div>
<div class="t " style="left:118.30px;top:294.89px;color:#222;font-size:6.71px;letter-spacing:0.000px;transform:scaleX(0.9091);transform-origin:left center">3556</div>
<div class="t " style="left:149.70px;top:294.89px;color:#222;font-size:6.71px;letter-spacing:0.000px;transform:scaleX(0.9091);transform-origin:left center">Feb 9</div>
<div class="t " style="left:190.80px;top:294.89px;color:#2a5f8f;font-size:6.60px;letter-spacing:0.000px;transform:scaleX(0.9091);transform-origin:left center">Michael Jordan</div>
<div class="t " style="left:255.50px;top:294.89px;color:#222;font-size:6.82px;letter-spacing:0.000px;transform:scaleX(0.9091);transform-origin:left center">NBA</div>
<div class="t " style="left:329.60px;top:294.89px;color:#222;font-size:6.71px;letter-spacing:0.000px;transform:scaleX(0.9091);transform-origin:left center">New York, BC</div>
<div class="t " style="left:386.40px;top:294.89px;color:#2a5f8f;font-size:6.69px;letter-spacing:0.000px;transform:scaleX(0.9091);transform-origin:left center">Managed Service Proposal Copy - Scott Variant A</div>
<div class="t " style="right:284.90px;top:289.69px;color:#222;font-size:6.71px;letter-spacing:0.000px;transform:scaleX(0.9091);transform-origin:right center">$11,960.60 USD</div>
<div class="t " style="right:284.90px;top:299.99px;color:#c2c2c2;font-size:7.04px;letter-spacing:0.000px;transform:scaleX(0.9091);transform-origin:right center">$3,945.10 (37%)</div>
<div class="t " style="right:228.20px;top:289.69px;color:#222;font-size:6.71px;letter-spacing:0.000px;transform:scaleX(0.9091);transform-origin:right center">$263.15 USD</div>
<div class="t " style="right:228.20px;top:299.99px;color:#c2c2c2;font-size:7.04px;letter-spacing:0.000px;transform:scaleX(0.9091);transform-origin:right center">$171.95 (73%)</div>
<div class="b" style="left:675px;top:293.19px;width:40.799999999999955px;height:10.399999999999977px;background:#ececec;border:1px solid #e0e0e0;box-sizing:border-box;border-radius:1px"></div>
<div class="t " style="left:679.00px;top:295.19px;color:#1a1a1a;font-size:6.00px;letter-spacing:0.000px;transform:scaleX(0.9000);transform-origin:left center">Pending</div>
<div class="b" style="left:706.7px;top:296.09px"><svg width="6.6" height="4.2" viewBox="0 0 13 8"><path d="M1.3 1.3 L6.5 6.3 L11.7 1.3" fill="none" stroke="#151515" stroke-width="2"/></svg></div>
<div class="b" style="left:733.9px;top:294.69px;width:8px;height:8px;border:1px solid #aaa;border-radius:50%;box-sizing:border-box;background:#fff"></div>
<div class="b" style="left:756.3px;top:290.99px;width:63.80000000000007px;height:15.099999999999966px;background:#fff;border:1px solid #d6d6d6;box-sizing:border-box;border-radius:1.5px"></div>
<div class="b" style="left:769.06px;top:290.99px;width:0.7000000000000455px;height:15.099999999999966px;background:#dcdcdc"></div>
<div class="b" style="left:781.8199999999999px;top:290.99px;width:0.7000000000000455px;height:15.099999999999966px;background:#dcdcdc"></div>
<div class="b" style="left:794.5799999999999px;top:290.99px;width:0.7000000000000455px;height:15.099999999999966px;background:#dcdcdc"></div>
<div class="b" style="left:807.3399999999999px;top:290.99px;width:0.7000000000000455px;height:15.099999999999966px;background:#dcdcdc"></div>
<div class="b" style="left:759.18px;top:295.09px;line-height:0"><svg width="7" height="7" viewBox="0 0 14 14"><circle cx="5.6" cy="5.6" r="4.1" fill="none" stroke="#1a1a1a" stroke-width="2.1"/><path d="M8.7 8.7 L12.4 12.4" stroke="#1a1a1a" stroke-width="2.6" stroke-linecap="round"/></svg></div>
<div class="b" style="left:771.9399999999999px;top:295.09px;line-height:0"><svg width="7" height="7" viewBox="0 0 14 14"><path d="M1.2 12.8 L1.8 9.6 L9.4 2 L12 4.6 L4.4 12.2 Z" fill="#1f1f1f"/><path d="M10.2 1.2 L11 0.4 Q11.6 -0.1 12.2 0.5 L13.5 1.8 Q14.1 2.4 13.6 3 L12.8 3.8Z" fill="#1f1f1f"/></svg></div>
<div class="b" style="left:784.1999999999999px;top:295.39px;line-height:0"><svg width="8" height="6.4" viewBox="0 0 16 12.8"><rect x="0.5" y="0.8" width="15" height="11.4" rx="1" fill="#e5475b"/><path d="M1 2.5 L8 7.3 L15 2.5" fill="none" stroke="#fff" stroke-width="1.1"/></svg></div>
<div class="b" style="left:796.9599999999999px;top:295.09px;line-height:0"><svg width="8" height="7" viewBox="0 0 16 14"><ellipse cx="8.5" cy="6" rx="6.4" ry="4.5" fill="none" stroke="#333" stroke-width="1.3"/><path d="M4 9.2 L2.2 12.8 L6.8 10.3" fill="#fff" stroke="#333" stroke-width="1.2"/></svg></div>
<div class="b" style="left:810.2199999999999px;top:297.09px;line-height:0"><svg width="7" height="3" viewBox="0 0 14 6"><rect x="0.6" y="1.4" width="3.4" height="3.2" fill="#1f1f1f"/><rect x="5.3" y="1.4" width="3.4" height="3.2" fill="#1f1f1f"/><rect x="10" y="1.4" width="3.4" height="3.2" fill="#1f1f1f"/></svg></div>
<div class="b" style="left:67.4px;top:311.56px;width:756.4px;height:26.370000000000005px;background:#ffffff"></div>
<div class="b" style="left:72px;top:321.46px;width:6px;height:6.0px;background:#fff;border:1px solid #a5a5a5;box-sizing:border-box;border-radius:1px"></div>
<div class="b" style="left:90.9px;top:315.86px"><svg width="15" height="15" viewBox="0 0 30 30"><defs><radialGradient id="bg3m" cx="50%" cy="50%" r="50%"><stop offset="0.35" stop-color="#f0f2f2"/><stop offset="1" stop-color="#c4cacc"/></radialGradient><clipPath id="cp3m"><circle cx="15" cy="15" r="13.8"/></clipPath></defs><circle cx="15" cy="15" r="14" fill="url(#bg3m)"/><g clip-path="url(#cp3m)"><path d="M3 31 Q4 24 11 23 H19 Q26 24 27 31Z" fill="#dde4ec"/><rect x="12.5" y="19" width="5" height="5" fill="#cfa890"/><ellipse cx="15" cy="14.3" rx="6" ry="7.4" fill="#dcbba6"/><path d="M8.9 12.5 Q8.5 5 15 4.8 Q21.5 5 21.1 12.5 Q20.3 8.8 15 8.6 Q9.7 8.8 8.9 12.5Z" fill="#2a2420"/></g><circle cx="15" cy="15" r="14" fill="none" stroke="#8ecbd0" stroke-width="1.3"/></svg></div>
<div class="t " style="left:118.30px;top:321.26px;color:#222;font-size:6.71px;letter-spacing:0.000px;transform:scaleX(0.9091);transform-origin:left center">3555</div>
<div class="t " style="left:149.70px;top:321.26px;color:#222;font-size:6.71px;letter-spacing:0.000px;transform:scaleX(0.9091);transform-origin:left center">Feb 9</div>
<div class="t " style="left:190.80px;top:321.26px;color:#2a5f8f;font-size:6.60px;letter-spacing:0.000px;transform:scaleX(0.9091);transform-origin:left center">Michael Jordan</div>
<div class="t " style="left:255.50px;top:321.26px;color:#222;font-size:6.82px;letter-spacing:0.000px;transform:scaleX(0.9091);transform-origin:left center">NBA</div>
<div class="t " style="left:329.60px;top:321.26px;color:#222;font-size:6.71px;letter-spacing:0.000px;transform:scaleX(0.9091);transform-origin:left center">New York, NY</div>
<div class="t " style="left:386.40px;top:321.26px;color:#2a5f8f;font-size:6.69px;letter-spacing:0.000px;transform:scaleX(0.9091);transform-origin:left center">Managed Service Proposal Copy - Scott Variant A</div>
<div class="t " style="right:284.90px;top:316.06px;color:#222;font-size:6.71px;letter-spacing:0.000px;transform:scaleX(0.9091);transform-origin:right center">$1,456.00 USD</div>
<div class="t " style="right:284.90px;top:326.36px;color:#c2c2c2;font-size:7.04px;letter-spacing:0.000px;transform:scaleX(0.9091);transform-origin:right center">$1,400.00 (100%)</div>
<div class="t " style="right:228.20px;top:316.06px;color:#222;font-size:6.71px;letter-spacing:0.000px;transform:scaleX(0.9091);transform-origin:right center">$0.00 USD</div>
<div class="t " style="right:228.20px;top:326.36px;color:#c2c2c2;font-size:7.04px;letter-spacing:0.000px;transform:scaleX(0.9091);transform-origin:right center">$0.00 (0%)</div>
<div class="b" style="left:675px;top:319.56px;width:40.799999999999955px;height:10.399999999999977px;background:#ececec;border:1px solid #e0e0e0;box-sizing:border-box;border-radius:1px"></div>
<div class="t " style="left:679.00px;top:321.56px;color:#1a1a1a;font-size:6.00px;letter-spacing:0.000px;transform:scaleX(0.9000);transform-origin:left center">Pending</div>
<div class="b" style="left:706.7px;top:322.46px"><svg width="6.6" height="4.2" viewBox="0 0 13 8"><path d="M1.3 1.3 L6.5 6.3 L11.7 1.3" fill="none" stroke="#151515" stroke-width="2"/></svg></div>
<div class="b" style="left:733.9px;top:321.06px;width:8px;height:8px;border:1px solid #aaa;border-radius:50%;box-sizing:border-box;background:#fff"></div>
<div class="b" style="left:756.3px;top:317.36px;width:63.80000000000007px;height:15.099999999999966px;background:#fff;border:1px solid #d6d6d6;box-sizing:border-box;border-radius:1.5px"></div>
<div class="b" style="left:769.06px;top:317.36px;width:0.7000000000000455px;height:15.099999999999966px;background:#dcdcdc"></div>
<div class="b" style="left:781.8199999999999px;top:317.36px;width:0.7000000000000455px;height:15.099999999999966px;background:#dcdcdc"></div>
<div class="b" style="left:794.5799999999999px;top:317.36px;width:0.7000000000000455px;height:15.099999999999966px;background:#dcdcdc"></div>
<div class="b" style="left:807.3399999999999px;top:317.36px;width:0.7000000000000455px;height:15.099999999999966px;background:#dcdcdc"></div>
<div class="b" style="left:759.18px;top:321.46px;line-height:0"><svg width="7" height="7" viewBox="0 0 14 14"><circle cx="5.6" cy="5.6" r="4.1" fill="none" stroke="#1a1a1a" stroke-width="2.1"/><path d="M8.7 8.7 L12.4 12.4" stroke="#1a1a1a" stroke-width="2.6" stroke-linecap="round"/></svg></div>
<div class="b" style="left:771.9399999999999px;top:321.46px;line-height:0"><svg width="7" height="7" viewBox="0 0 14 14"><path d="M1.2 12.8 L1.8 9.6 L9.4 2 L12 4.6 L4.4 12.2 Z" fill="#1f1f1f"/><path d="M10.2 1.2 L11 0.4 Q11.6 -0.1 12.2 0.5 L13.5 1.8 Q14.1 2.4 13.6 3 L12.8 3.8Z" fill="#1f1f1f"/></svg></div>
<div class="b" style="left:784.1999999999999px;top:321.76px;line-height:0"><svg width="8" height="6.4" viewBox="0 0 16 12.8"><rect x="1" y="1" width="14" height="10.8" rx="1.4" fill="none" stroke="#555" stroke-width="1.5"/><path d="M1.5 2.5 L8 7.3 L14.5 2.5" fill="none" stroke="#555" stroke-width="1.4"/></svg></div>
<div class="b" style="left:796.9599999999999px;top:321.46px;line-height:0"><svg width="8" height="7" viewBox="0 0 16 14"><ellipse cx="8.5" cy="6" rx="6.4" ry="4.5" fill="none" stroke="#333" stroke-width="1.3"/><path d="M4 9.2 L2.2 12.8 L6.8 10.3" fill="#fff" stroke="#333" stroke-width="1.2"/></svg></div>
<div class="b" style="left:810.2199999999999px;top:323.46px;line-height:0"><svg width="7" height="3" viewBox="0 0 14 6"><rect x="0.6" y="1.4" width="3.4" height="3.2" fill="#1f1f1f"/><rect x="5.3" y="1.4" width="3.4" height="3.2" fill="#1f1f1f"/><rect x="10" y="1.4" width="3.4" height="3.2" fill="#1f1f1f"/></svg></div>
<div class="b" style="left:67.4px;top:337.93px;width:756.4px;height:26.370000000000005px;background:#f6f6f6"></div>
<div class="b" style="left:72px;top:347.83px;width:6px;height:6.0px;background:#fff;border:1px solid #a5a5a5;box-sizing:border-box;border-radius:1px"></div>
<div class="b" style="left:90.9px;top:342.23px"><svg width="15" height="15" viewBox="0 0 30 30"><defs><radialGradient id="bg4j" cx="50%" cy="50%" r="50%"><stop offset="0.35" stop-color="#eef0f1"/><stop offset="1" stop-color="#c0c6c9"/></radialGradient><clipPath id="cp4j"><circle cx="15" cy="15" r="13.8"/></clipPath></defs><circle cx="15" cy="15" r="14" fill="url(#bg4j)"/><g clip-path="url(#cp4j)"><path d="M2 31 Q3 24 10.5 22.5 H19.5 Q27 24 28 31Z" fill="#1c2d4e"/><path d="M12 22.5 L15 28 L18 22.5Z" fill="#e9eef3"/><rect x="12.5" y="18.5" width="5" height="4.5" fill="#b08870"/><ellipse cx="15" cy="14" rx="5.9" ry="7.3" fill="#c29c84"/><path d="M9 12 Q8.6 4.6 15 4.5 Q21.4 4.6 21 12 Q20.2 8.2 15 8 Q9.8 8.2 9 12Z" fill="#2a211c"/></g><circle cx="15" cy="15" r="14" fill="none" stroke="#8ecbd0" stroke-width="1.3"/></svg></div>
<div class="t " style="left:118.30px;top:347.63px;color:#222;font-size:6.71px;letter-spacing:0.000px;transform:scaleX(0.9091);transform-origin:left center">3554</div>
<div class="t " style="left:149.70px;top:347.63px;color:#222;font-size:6.71px;letter-spacing:0.000px;transform:scaleX(0.9091);transform-origin:left center">Feb 8</div>
<div class="t " style="left:190.80px;top:347.63px;color:#2a5f8f;font-size:6.60px;letter-spacing:0.000px;transform:scaleX(0.9091);transform-origin:left center">Jan Karlo Manuel</div>
<div class="t " style="left:255.50px;top:347.63px;color:#222;font-size:6.82px;letter-spacing:0.000px;transform:scaleX(0.9091);transform-origin:left center">Quoter Software Inc.</div>
<div class="t " style="left:329.60px;top:347.63px;color:#222;font-size:6.71px;letter-spacing:0.000px;transform:scaleX(0.9091);transform-origin:left center">Vancouver, BC</div>
<div class="t " style="left:386.40px;top:347.63px;color:#2a5f8f;font-size:6.69px;letter-spacing:0.000px;transform:scaleX(0.9091);transform-origin:left center">Managed Service Proposal Copy - Scott Variant C</div>
<div class="t " style="right:284.90px;top:342.43px;color:#222;font-size:6.71px;letter-spacing:0.000px;transform:scaleX(0.9091);transform-origin:right center">$8,012.60 USD</div>
<div class="t " style="right:284.90px;top:352.73px;color:#c2c2c2;font-size:7.04px;letter-spacing:0.000px;transform:scaleX(0.9091);transform-origin:right center">$4,919.10 (69%)</div>
<div class="t " style="right:228.20px;top:342.43px;color:#222;font-size:6.71px;letter-spacing:0.000px;transform:scaleX(0.9091);transform-origin:right center">$263.15 USD</div>
<div class="t " style="right:228.20px;top:352.73px;color:#c2c2c2;font-size:7.04px;letter-spacing:0.000px;transform:scaleX(0.9091);transform-origin:right center">$171.95 (73%)</div>
<div class="b" style="left:675px;top:345.93px;width:40.799999999999955px;height:10.399999999999977px;background:#ececec;border:1px solid #e0e0e0;box-sizing:border-box;border-radius:1px"></div>
<div class="t " style="left:679.00px;top:347.93px;color:#1a1a1a;font-size:6.00px;letter-spacing:0.000px;transform:scaleX(0.9000);transform-origin:left center">Accepted</div>
<div class="b" style="left:706.7px;top:348.83px"><svg width="6.6" height="4.2" viewBox="0 0 13 8"><path d="M1.3 1.3 L6.5 6.3 L11.7 1.3" fill="none" stroke="#151515" stroke-width="2"/></svg></div>
<div class="b" style="left:733.9px;top:347.43px;width:8px;height:8px;border:1px solid #aaa;border-radius:50%;box-sizing:border-box;background:#fff"></div>
<div class="b" style="left:756.3px;top:343.73px;width:63.80000000000007px;height:15.099999999999966px;background:#fff;border:1px solid #d6d6d6;box-sizing:border-box;border-radius:1.5px"></div>
<div class="b" style="left:769.06px;top:343.73px;width:0.7000000000000455px;height:15.099999999999966px;background:#dcdcdc"></div>
<div class="b" style="left:781.8199999999999px;top:343.73px;width:0.7000000000000455px;height:15.099999999999966px;background:#dcdcdc"></div>
<div class="b" style="left:794.5799999999999px;top:343.73px;width:0.7000000000000455px;height:15.099999999999966px;background:#dcdcdc"></div>
<div class="b" style="left:807.3399999999999px;top:343.73px;width:0.7000000000000455px;height:15.099999999999966px;background:#dcdcdc"></div>
<div class="b" style="left:759.18px;top:347.83px;line-height:0"><svg width="7" height="7" viewBox="0 0 14 14"><circle cx="5.6" cy="5.6" r="4.1" fill="none" stroke="#1a1a1a" stroke-width="2.1"/><path d="M8.7 8.7 L12.4 12.4" stroke="#1a1a1a" stroke-width="2.6" stroke-linecap="round"/></svg></div>
<div class="b" style="left:771.9399999999999px;top:347.83px;line-height:0"><svg width="7" height="7" viewBox="0 0 14 14"><path d="M1.2 12.8 L1.8 9.6 L9.4 2 L12 4.6 L4.4 12.2 Z" fill="#1f1f1f"/><path d="M10.2 1.2 L11 0.4 Q11.6 -0.1 12.2 0.5 L13.5 1.8 Q14.1 2.4 13.6 3 L12.8 3.8Z" fill="#1f1f1f"/></svg></div>
<div class="b" style="left:784.1999999999999px;top:347.58px;line-height:0"><svg width="8" height="7.5" viewBox="0 0 16 15"><path d="M0.5 6.5 L8 1 L15.5 6.5 V14.5 H0.5 Z" fill="#22b08f"/><path d="M0.8 7 L8 11.3 L15.2 7" fill="none" stroke="#fff" stroke-width="1.1"/></svg></div>
<div class="b" style="left:796.9599999999999px;top:347.83px;line-height:0"><svg width="8" height="7" viewBox="0 0 16 14"><ellipse cx="8.5" cy="6" rx="6.4" ry="4.5" fill="none" stroke="#333" stroke-width="1.3"/><path d="M4 9.2 L2.2 12.8 L6.8 10.3" fill="#fff" stroke="#333" stroke-width="1.2"/></svg></div>
<div class="b" style="left:810.2199999999999px;top:349.83px;line-height:0"><svg width="7" height="3" viewBox="0 0 14 6"><rect x="0.6" y="1.4" width="3.4" height="3.2" fill="#1f1f1f"/><rect x="5.3" y="1.4" width="3.4" height="3.2" fill="#1f1f1f"/><rect x="10" y="1.4" width="3.4" height="3.2" fill="#1f1f1f"/></svg></div>
<div class="b" style="left:67.4px;top:364.29999999999995px;width:756.4px;height:26.370000000000005px;background:#ffffff"></div>
<div class="b" style="left:72px;top:374.19999999999993px;width:6px;height:6.0px;background:#fff;border:1px solid #a5a5a5;box-sizing:border-box;border-radius:1px"></div>
<div class="b" style="left:90.9px;top:368.59999999999997px"><svg width="15" height="15" viewBox="0 0 30 30"><defs><radialGradient id="bg5m" cx="50%" cy="50%" r="50%"><stop offset="0.35" stop-color="#f0f2f2"/><stop offset="1" stop-color="#c4cacc"/></radialGradient><clipPath id="cp5m"><circle cx="15" cy="15" r="13.8"/></clipPath></defs><circle cx="15" cy="15" r="14" fill="url(#bg5m)"/><g clip-path="url(#cp5m)"><path d="M3 31 Q4 24 11 23 H19 Q26 24 27 31Z" fill="#dde4ec"/><rect x="12.5" y="19" width="5" height="5" fill="#cfa890"/><ellipse cx="15" cy="14.3" rx="6" ry="7.4" fill="#dcbba6"/><path d="M8.9 12.5 Q8.5 5 15 4.8 Q21.5 5 21.1 12.5 Q20.3 8.8 15 8.6 Q9.7 8.8 8.9 12.5Z" fill="#2a2420"/></g><circle cx="15" cy="15" r="14" fill="none" stroke="#8ecbd0" stroke-width="1.3"/></svg></div>
<div class="t " style="left:118.30px;top:374.00px;color:#222;font-size:6.71px;letter-spacing:0.000px;transform:scaleX(0.9091);transform-origin:left center">3553.2</div>
<div class="t " style="left:149.70px;top:374.00px;color:#222;font-size:6.71px;letter-spacing:0.000px;transform:scaleX(0.9091);transform-origin:left center">Feb 8</div>
<div class="t " style="left:190.80px;top:374.00px;color:#2a5f8f;font-size:6.60px;letter-spacing:0.000px;transform:scaleX(0.9091);transform-origin:left center">Michael Jordan</div>
<div class="t " style="left:255.50px;top:374.00px;color:#222;font-size:6.82px;letter-spacing:0.000px;transform:scaleX(0.9091);transform-origin:left center">N&#39;B"A"</div>
<div class="t " style="left:386.40px;top:374.00px;color:#2a5f8f;font-size:6.69px;letter-spacing:0.000px;transform:scaleX(0.9091);transform-origin:left center">Simple Transactional Quote</div>
<div class="t " style="right:284.90px;top:368.80px;color:#222;font-size:6.71px;letter-spacing:0.000px;transform:scaleX(0.9091);transform-origin:right center">$14,816.42 USD</div>
<div class="t " style="right:284.90px;top:379.10px;color:#c2c2c2;font-size:7.04px;letter-spacing:0.000px;transform:scaleX(0.9091);transform-origin:right center">$4,954.55 (33%)</div>
<div class="t " style="right:228.20px;top:368.80px;color:#222;font-size:6.71px;letter-spacing:0.000px;transform:scaleX(0.9091);transform-origin:right center">$20.00 USD</div>
<div class="t " style="right:228.20px;top:379.10px;color:#c2c2c2;font-size:7.04px;letter-spacing:0.000px;transform:scaleX(0.9091);transform-origin:right center">$11.00 (55%)</div>
<div class="b" style="left:675px;top:372.29999999999995px;width:40.799999999999955px;height:10.399999999999977px;background:#ececec;border:1px solid #e0e0e0;box-sizing:border-box;border-radius:1px"></div>
<div class="t " style="left:679.00px;top:374.30px;color:#1a1a1a;font-size:6.00px;letter-spacing:0.000px;transform:scaleX(0.9000);transform-origin:left center">Pending</div>
<div class="b" style="left:706.7px;top:375.19999999999993px"><svg width="6.6" height="4.2" viewBox="0 0 13 8"><path d="M1.3 1.3 L6.5 6.3 L11.7 1.3" fill="none" stroke="#151515" stroke-width="2"/></svg></div>
<div class="b" style="left:733.9px;top:373.79999999999995px;width:8px;height:8px;border:1px solid #aaa;border-radius:50%;box-sizing:border-box;background:#fff"></div>
<div class="b" style="left:756.3px;top:370.09999999999997px;width:63.80000000000007px;height:15.099999999999966px;background:#fff;border:1px solid #d6d6d6;box-sizing:border-box;border-radius:1.5px"></div>
<div class="b" style="left:769.06px;top:370.09999999999997px;width:0.7000000000000455px;height:15.099999999999966px;background:#dcdcdc"></div>
<div class="b" style="left:781.8199999999999px;top:370.09999999999997px;width:0.7000000000000455px;height:15.099999999999966px;background:#dcdcdc"></div>
<div class="b" style="left:794.5799999999999px;top:370.09999999999997px;width:0.7000000000000455px;height:15.099999999999966px;background:#dcdcdc"></div>
<div class="b" style="left:807.3399999999999px;top:370.09999999999997px;width:0.7000000000000455px;height:15.099999999999966px;background:#dcdcdc"></div>
<div class="b" style="left:759.18px;top:374.19999999999993px;line-height:0"><svg width="7" height="7" viewBox="0 0 14 14"><circle cx="5.6" cy="5.6" r="4.1" fill="none" stroke="#1a1a1a" stroke-width="2.1"/><path d="M8.7 8.7 L12.4 12.4" stroke="#1a1a1a" stroke-width="2.6" stroke-linecap="round"/></svg></div>
<div class="b" style="left:771.9399999999999px;top:374.19999999999993px;line-height:0"><svg width="7" height="7" viewBox="0 0 14 14"><path d="M1.2 12.8 L1.8 9.6 L9.4 2 L12 4.6 L4.4 12.2 Z" fill="#1f1f1f"/><path d="M10.2 1.2 L11 0.4 Q11.6 -0.1 12.2 0.5 L13.5 1.8 Q14.1 2.4 13.6 3 L12.8 3.8Z" fill="#1f1f1f"/></svg></div>
<div class="b" style="left:784.1999999999999px;top:374.49999999999994px;line-height:0"><svg width="8" height="6.4" viewBox="0 0 16 12.8"><rect x="1" y="1" width="14" height="10.8" rx="1.4" fill="none" stroke="#555" stroke-width="1.5"/><path d="M1.5 2.5 L8 7.3 L14.5 2.5" fill="none" stroke="#555" stroke-width="1.4"/></svg></div>
<div class="b" style="left:796.9599999999999px;top:374.19999999999993px;line-height:0"><svg width="8" height="7" viewBox="0 0 16 14"><ellipse cx="8.5" cy="6" rx="6.4" ry="4.5" fill="none" stroke="#333" stroke-width="1.3"/><path d="M4 9.2 L2.2 12.8 L6.8 10.3" fill="#fff" stroke="#333" stroke-width="1.2"/></svg></div>
<div class="b" style="left:810.2199999999999px;top:376.19999999999993px;line-height:0"><svg width="7" height="3" viewBox="0 0 14 6"><rect x="0.6" y="1.4" width="3.4" height="3.2" fill="#1f1f1f"/><rect x="5.3" y="1.4" width="3.4" height="3.2" fill="#1f1f1f"/><rect x="10" y="1.4" width="3.4" height="3.2" fill="#1f1f1f"/></svg></div>
<div class="b" style="left:67.4px;top:390.66999999999996px;width:756.4px;height:26.370000000000005px;background:#f6f6f6"></div>
<div class="b" style="left:72px;top:400.56999999999994px;width:6px;height:6.0px;background:#fff;border:1px solid #a5a5a5;box-sizing:border-box;border-radius:1px"></div>
<div class="b" style="left:90.9px;top:394.96999999999997px"><svg width="15" height="15" viewBox="0 0 30 30"><defs><radialGradient id="bg6m" cx="50%" cy="50%" r="50%"><stop offset="0.35" stop-color="#f0f2f2"/><stop offset="1" stop-color="#c4cacc"/></radialGradient><clipPath id="cp6m"><circle cx="15" cy="15" r="13.8"/></clipPath></defs><circle cx="15" cy="15" r="14" fill="url(#bg6m)"/><g clip-path="url(#cp6m)"><path d="M3 31 Q4 24 11 23 H19 Q26 24 27 31Z" fill="#dde4ec"/><rect x="12.5" y="19" width="5" height="5" fill="#cfa890"/><ellipse cx="15" cy="14.3" rx="6" ry="7.4" fill="#dcbba6"/><path d="M8.9 12.5 Q8.5 5 15 4.8 Q21.5 5 21.1 12.5 Q20.3 8.8 15 8.6 Q9.7 8.8 8.9 12.5Z" fill="#2a2420"/></g><circle cx="15" cy="15" r="14" fill="none" stroke="#8ecbd0" stroke-width="1.3"/></svg></div>
<div class="t " style="left:118.30px;top:400.37px;color:#222;font-size:6.71px;letter-spacing:0.000px;transform:scaleX(0.9091);transform-origin:left center">3553</div>
<div class="t " style="left:149.70px;top:400.37px;color:#222;font-size:6.71px;letter-spacing:0.000px;transform:scaleX(0.9091);transform-origin:left center">Feb 8</div>
<div class="t " style="left:190.80px;top:400.37px;color:#2a5f8f;font-size:6.60px;letter-spacing:0.000px;transform:scaleX(0.9091);transform-origin:left center">Michael Jordan</div>
<div class="t " style="left:255.50px;top:400.37px;color:#222;font-size:6.82px;letter-spacing:0.000px;transform:scaleX(0.9091);transform-origin:left center">N&#39;B"A"</div>
<div class="t " style="left:386.40px;top:400.37px;color:#2a5f8f;font-size:6.69px;letter-spacing:0.000px;transform:scaleX(0.9091);transform-origin:left center">Simple Transactional Quote</div>
<div class="t " style="right:284.90px;top:395.17px;color:#222;font-size:6.71px;letter-spacing:0.000px;transform:scaleX(0.9091);transform-origin:right center">$14,816.42 USD</div>
<div class="t " style="right:284.90px;top:405.47px;color:#c2c2c2;font-size:7.04px;letter-spacing:0.000px;transform:scaleX(0.9091);transform-origin:right center">$4,954.55 (33%)</div>
<div class="t " style="right:228.20px;top:395.17px;color:#222;font-size:6.71px;letter-spacing:0.000px;transform:scaleX(0.9091);transform-origin:right center">$20.00 USD</div>
<div class="t " style="right:228.20px;top:405.47px;color:#c2c2c2;font-size:7.04px;letter-spacing:0.000px;transform:scaleX(0.9091);transform-origin:right center">$11.00 (55%)</div>
<div class="b" style="left:675px;top:398.66999999999996px;width:40.799999999999955px;height:10.399999999999977px;background:#ececec;border:1px solid #e0e0e0;box-sizing:border-box;border-radius:1px"></div>
<div class="t " style="left:679.00px;top:400.67px;color:#1a1a1a;font-size:6.00px;letter-spacing:0.000px;transform:scaleX(0.9000);transform-origin:left center">Pending</div>
<div class="b" style="left:706.7px;top:401.56999999999994px"><svg width="6.6" height="4.2" viewBox="0 0 13 8"><path d="M1.3 1.3 L6.5 6.3 L11.7 1.3" fill="none" stroke="#151515" stroke-width="2"/></svg></div>
<div class="b" style="left:733.9px;top:400.16999999999996px;width:8px;height:8px;border:1px solid #aaa;border-radius:50%;box-sizing:border-box;background:#fff"></div>
<div class="b" style="left:756.3px;top:396.46999999999997px;width:63.80000000000007px;height:15.099999999999966px;background:#fff;border:1px solid #d6d6d6;box-sizing:border-box;border-radius:1.5px"></div>
<div class="b" style="left:769.06px;top:396.46999999999997px;width:0.7000000000000455px;height:15.099999999999966px;background:#dcdcdc"></div>
<div class="b" style="left:781.8199999999999px;top:396.46999999999997px;width:0.7000000000000455px;height:15.099999999999966px;background:#dcdcdc"></div>
<div class="b" style="left:794.5799999999999px;top:396.46999999999997px;width:0.7000000000000455px;height:15.099999999999966px;background:#dcdcdc"></div>
<div class="b" style="left:807.3399999999999px;top:396.46999999999997px;width:0.7000000000000455px;height:15.099999999999966px;background:#dcdcdc"></div>
<div class="b" style="left:759.18px;top:400.56999999999994px;line-height:0"><svg width="7" height="7" viewBox="0 0 14 14"><circle cx="5.6" cy="5.6" r="4.1" fill="none" stroke="#1a1a1a" stroke-width="2.1"/><path d="M8.7 8.7 L12.4 12.4" stroke="#1a1a1a" stroke-width="2.6" stroke-linecap="round"/></svg></div>
<div class="b" style="left:771.9399999999999px;top:400.56999999999994px;line-height:0"><svg width="7" height="7" viewBox="0 0 14 14"><path d="M1.2 12.8 L1.8 9.6 L9.4 2 L12 4.6 L4.4 12.2 Z" fill="#1f1f1f"/><path d="M10.2 1.2 L11 0.4 Q11.6 -0.1 12.2 0.5 L13.5 1.8 Q14.1 2.4 13.6 3 L12.8 3.8Z" fill="#1f1f1f"/></svg></div>
<div class="b" style="left:784.1999999999999px;top:400.86999999999995px;line-height:0"><svg width="8" height="6.4" viewBox="0 0 16 12.8"><rect x="1" y="1" width="14" height="10.8" rx="1.4" fill="none" stroke="#555" stroke-width="1.5"/><path d="M1.5 2.5 L8 7.3 L14.5 2.5" fill="none" stroke="#555" stroke-width="1.4"/></svg></div>
<div class="b" style="left:796.9599999999999px;top:400.56999999999994px;line-height:0"><svg width="8" height="7" viewBox="0 0 16 14"><ellipse cx="8.5" cy="6" rx="6.4" ry="4.5" fill="none" stroke="#333" stroke-width="1.3"/><path d="M4 9.2 L2.2 12.8 L6.8 10.3" fill="#fff" stroke="#333" stroke-width="1.2"/></svg></div>
<div class="b" style="left:810.2199999999999px;top:402.56999999999994px;line-height:0"><svg width="7" height="3" viewBox="0 0 14 6"><rect x="0.6" y="1.4" width="3.4" height="3.2" fill="#1f1f1f"/><rect x="5.3" y="1.4" width="3.4" height="3.2" fill="#1f1f1f"/><rect x="10" y="1.4" width="3.4" height="3.2" fill="#1f1f1f"/></svg></div>
<div class="b" style="left:67.4px;top:417.03999999999996px;width:756.4px;height:26.370000000000005px;background:#ffffff"></div>
<div class="b" style="left:72px;top:426.93999999999994px;width:6px;height:6.0px;background:#fff;border:1px solid #a5a5a5;box-sizing:border-box;border-radius:1px"></div>
<div class="b" style="left:90.9px;top:421.34px"><svg width="15" height="15" viewBox="0 0 30 30"><defs><radialGradient id="bg7m" cx="50%" cy="50%" r="50%"><stop offset="0.35" stop-color="#f0f2f2"/><stop offset="1" stop-color="#c4cacc"/></radialGradient><clipPath id="cp7m"><circle cx="15" cy="15" r="13.8"/></clipPath></defs><circle cx="15" cy="15" r="14" fill="url(#bg7m)"/><g clip-path="url(#cp7m)"><path d="M3 31 Q4 24 11 23 H19 Q26 24 27 31Z" fill="#dde4ec"/><rect x="12.5" y="19" width="5" height="5" fill="#cfa890"/><ellipse cx="15" cy="14.3" rx="6" ry="7.4" fill="#dcbba6"/><path d="M8.9 12.5 Q8.5 5 15 4.8 Q21.5 5 21.1 12.5 Q20.3 8.8 15 8.6 Q9.7 8.8 8.9 12.5Z" fill="#2a2420"/></g><circle cx="15" cy="15" r="14" fill="none" stroke="#8ecbd0" stroke-width="1.3"/></svg></div>
<div class="t " style="left:118.30px;top:426.74px;color:#222;font-size:6.71px;letter-spacing:0.000px;transform:scaleX(0.9091);transform-origin:left center">3552</div>
<div class="t " style="left:149.70px;top:426.74px;color:#222;font-size:6.71px;letter-spacing:0.000px;transform:scaleX(0.9091);transform-origin:left center">Feb 8</div>
<div class="t " style="left:190.80px;top:426.74px;color:#2a5f8f;font-size:6.60px;letter-spacing:0.000px;transform:scaleX(0.9091);transform-origin:left center">Michael Jordan</div>
<div class="t " style="left:255.50px;top:426.74px;color:#222;font-size:6.82px;letter-spacing:0.000px;transform:scaleX(0.9091);transform-origin:left center">N&#39;B"A"</div>
<div class="t " style="left:386.40px;top:426.74px;color:#2a5f8f;font-size:6.69px;letter-spacing:0.000px;transform:scaleX(0.9091);transform-origin:left center">Managed Service Proposal Copy - Scott Variant A</div>
<div class="t " style="right:284.90px;top:421.54px;color:#222;font-size:6.71px;letter-spacing:0.000px;transform:scaleX(0.9091);transform-origin:right center">$140.00 USD</div>
<div class="t " style="right:284.90px;top:431.84px;color:#c2c2c2;font-size:7.04px;letter-spacing:0.000px;transform:scaleX(0.9091);transform-origin:right center">$140.00 (100%)</div>
<div class="t " style="right:228.20px;top:421.54px;color:#222;font-size:6.71px;letter-spacing:0.000px;transform:scaleX(0.9091);transform-origin:right center">$300.00 USD</div>
<div class="t " style="right:228.20px;top:431.84px;color:#c2c2c2;font-size:7.04px;letter-spacing:0.000px;transform:scaleX(0.9091);transform-origin:right center">$220.00 (73%)</div>
<div class="b" style="left:675px;top:425.03999999999996px;width:40.799999999999955px;height:10.399999999999977px;background:#ececec;border:1px solid #e0e0e0;box-sizing:border-box;border-radius:1px"></div>
<div class="t " style="left:679.00px;top:427.04px;color:#1a1a1a;font-size:6.00px;letter-spacing:0.000px;transform:scaleX(0.9000);transform-origin:left center">Pending</div>
<div class="b" style="left:706.7px;top:427.93999999999994px"><svg width="6.6" height="4.2" viewBox="0 0 13 8"><path d="M1.3 1.3 L6.5 6.3 L11.7 1.3" fill="none" stroke="#151515" stroke-width="2"/></svg></div>
<div class="b" style="left:733.9px;top:426.53999999999996px;width:8px;height:8px;border:1px solid #aaa;border-radius:50%;box-sizing:border-box;background:#fff"></div>
<div class="b" style="left:756.3px;top:422.84px;width:63.80000000000007px;height:15.099999999999966px;background:#fff;border:1px solid #d6d6d6;box-sizing:border-box;border-radius:1.5px"></div>
<div class="b" style="left:769.06px;top:422.84px;width:0.7000000000000455px;height:15.099999999999966px;background:#dcdcdc"></div>
<div class="b" style="left:781.8199999999999px;top:422.84px;width:0.7000000000000455px;height:15.099999999999966px;background:#dcdcdc"></div>
<div class="b" style="left:794.5799999999999px;top:422.84px;width:0.7000000000000455px;height:15.099999999999966px;background:#dcdcdc"></div>
<div class="b" style="left:807.3399999999999px;top:422.84px;width:0.7000000000000455px;height:15.099999999999966px;background:#dcdcdc"></div>
<div class="b" style="left:759.18px;top:426.93999999999994px;line-height:0"><svg width="7" height="7" viewBox="0 0 14 14"><circle cx="5.6" cy="5.6" r="4.1" fill="none" stroke="#1a1a1a" stroke-width="2.1"/><path d="M8.7 8.7 L12.4 12.4" stroke="#1a1a1a" stroke-width="2.6" stroke-linecap="round"/></svg></div>
<div class="b" style="left:771.9399999999999px;top:426.93999999999994px;line-height:0"><svg width="7" height="7" viewBox="0 0 14 14"><path d="M1.2 12.8 L1.8 9.6 L9.4 2 L12 4.6 L4.4 12.2 Z" fill="#1f1f1f"/><path d="M10.2 1.2 L11 0.4 Q11.6 -0.1 12.2 0.5 L13.5 1.8 Q14.1 2.4 13.6 3 L12.8 3.8Z" fill="#1f1f1f"/></svg></div>
<div class="b" style="left:784.1999999999999px;top:427.23999999999995px;line-height:0"><svg width="8" height="6.4" viewBox="0 0 16 12.8"><rect x="1" y="1" width="14" height="10.8" rx="1.4" fill="none" stroke="#555" stroke-width="1.5"/><path d="M1.5 2.5 L8 7.3 L14.5 2.5" fill="none" stroke="#555" stroke-width="1.4"/></svg></div>
<div class="b" style="left:796.9599999999999px;top:426.93999999999994px;line-height:0"><svg width="8" height="7" viewBox="0 0 16 14"><ellipse cx="8.5" cy="6" rx="6.4" ry="4.5" fill="none" stroke="#333" stroke-width="1.3"/><path d="M4 9.2 L2.2 12.8 L6.8 10.3" fill="#fff" stroke="#333" stroke-width="1.2"/></svg></div>
<div class="b" style="left:810.2199999999999px;top:428.93999999999994px;line-height:0"><svg width="7" height="3" viewBox="0 0 14 6"><rect x="0.6" y="1.4" width="3.4" height="3.2" fill="#1f1f1f"/><rect x="5.3" y="1.4" width="3.4" height="3.2" fill="#1f1f1f"/><rect x="10" y="1.4" width="3.4" height="3.2" fill="#1f1f1f"/></svg></div>
<div class="b" style="left:67.4px;top:443.40999999999997px;width:756.4px;height:26.370000000000005px;background:#f6f6f6"></div>
<div class="b" style="left:72px;top:453.30999999999995px;width:6px;height:6.0px;background:#fff;border:1px solid #a5a5a5;box-sizing:border-box;border-radius:1px"></div>
<div class="b" style="left:90.9px;top:447.71px"><svg width="15" height="15" viewBox="0 0 30 30"><defs><radialGradient id="bg8j" cx="50%" cy="50%" r="50%"><stop offset="0.35" stop-color="#eef0f1"/><stop offset="1" stop-color="#c0c6c9"/></radialGradient><clipPath id="cp8j"><circle cx="15" cy="15" r="13.8"/></clipPath></defs><circle cx="15" cy="15" r="14" fill="url(#bg8j)"/><g clip-path="url(#cp8j)"><path d="M2 31 Q3 24 10.5 22.5 H19.5 Q27 24 28 31Z" fill="#1c2d4e"/><path d="M12 22.5 L15 28 L18 22.5Z" fill="#e9eef3"/><rect x="12.5" y="18.5" width="5" height="4.5" fill="#b08870"/><ellipse cx="15" cy="14" rx="5.9" ry="7.3" fill="#c29c84"/><path d="M9 12 Q8.6 4.6 15 4.5 Q21.4 4.6 21 12 Q20.2 8.2 15 8 Q9.8 8.2 9 12Z" fill="#2a211c"/></g><circle cx="15" cy="15" r="14" fill="none" stroke="#8ecbd0" stroke-width="1.3"/></svg></div>
<div class="t " style="left:118.30px;top:453.11px;color:#222;font-size:6.71px;letter-spacing:0.000px;transform:scaleX(0.9091);transform-origin:left center">3551</div>
<div class="t " style="left:149.70px;top:453.11px;color:#222;font-size:6.71px;letter-spacing:0.000px;transform:scaleX(0.9091);transform-origin:left center">Feb 8</div>
<div class="t " style="left:190.80px;top:453.11px;color:#2a5f8f;font-size:6.60px;letter-spacing:0.000px;transform:scaleX(0.9091);transform-origin:left center">Jan Karlo Manuel</div>
<div class="t " style="left:255.50px;top:453.11px;color:#222;font-size:6.82px;letter-spacing:0.000px;transform:scaleX(0.9091);transform-origin:left center">Quoter Software Inc.</div>
<div class="t " style="left:329.60px;top:453.11px;color:#222;font-size:6.71px;letter-spacing:0.000px;transform:scaleX(0.9091);transform-origin:left center">Vancouver, BC</div>
<div class="t " style="left:386.40px;top:453.11px;color:#2a5f8f;font-size:6.69px;letter-spacing:0.000px;transform:scaleX(0.9091);transform-origin:left center">Empty Template</div>
<div class="t " style="right:284.90px;top:447.91px;color:#222;font-size:6.71px;letter-spacing:0.000px;transform:scaleX(0.9091);transform-origin:right center">$9,038.01 USD</div>
<div class="t " style="right:284.90px;top:458.21px;color:#c2c2c2;font-size:7.04px;letter-spacing:0.000px;transform:scaleX(0.9091);transform-origin:right center">$1,862.23 (23%)</div>
<div class="t " style="right:228.20px;top:447.91px;color:#222;font-size:6.71px;letter-spacing:0.000px;transform:scaleX(0.9091);transform-origin:right center">$588.00 USD</div>
<div class="t " style="right:228.20px;top:458.21px;color:#c2c2c2;font-size:7.04px;letter-spacing:0.000px;transform:scaleX(0.9091);transform-origin:right center">$210.00 (40%)</div>
<div class="b" style="left:675px;top:451.40999999999997px;width:40.799999999999955px;height:10.399999999999977px;background:#ececec;border:1px solid #e0e0e0;box-sizing:border-box;border-radius:1px"></div>
<div class="t " style="left:679.00px;top:453.41px;color:#1a1a1a;font-size:6.00px;letter-spacing:0.000px;transform:scaleX(0.9000);transform-origin:left center">Accepted</div>
<div class="b" style="left:706.7px;top:454.30999999999995px"><svg width="6.6" height="4.2" viewBox="0 0 13 8"><path d="M1.3 1.3 L6.5 6.3 L11.7 1.3" fill="none" stroke="#151515" stroke-width="2"/></svg></div>
<div class="b" style="left:733.9px;top:452.90999999999997px;width:8px;height:8px;border:1px solid #aaa;border-radius:50%;box-sizing:border-box;background:#fff"></div>
<div class="b" style="left:756.3px;top:449.21px;width:63.80000000000007px;height:15.099999999999966px;background:#fff;border:1px solid #d6d6d6;box-sizing:border-box;border-radius:1.5px"></div>
<div class="b" style="left:769.06px;top:449.21px;width:0.7000000000000455px;height:15.099999999999966px;background:#dcdcdc"></div>
<div class="b" style="left:781.8199999999999px;top:449.21px;width:0.7000000000000455px;height:15.099999999999966px;background:#dcdcdc"></div>
<div class="b" style="left:794.5799999999999px;top:449.21px;width:0.7000000000000455px;height:15.099999999999966px;background:#dcdcdc"></div>
<div class="b" style="left:807.3399999999999px;top:449.21px;width:0.7000000000000455px;height:15.099999999999966px;background:#dcdcdc"></div>
<div class="b" style="left:759.18px;top:453.30999999999995px;line-height:0"><svg width="7" height="7" viewBox="0 0 14 14"><circle cx="5.6" cy="5.6" r="4.1" fill="none" stroke="#1a1a1a" stroke-width="2.1"/><path d="M8.7 8.7 L12.4 12.4" stroke="#1a1a1a" stroke-width="2.6" stroke-linecap="round"/></svg></div>
<div class="b" style="left:771.9399999999999px;top:453.30999999999995px;line-height:0"><svg width="7" height="7" viewBox="0 0 14 14"><path d="M1.2 12.8 L1.8 9.6 L9.4 2 L12 4.6 L4.4 12.2 Z" fill="#1f1f1f"/><path d="M10.2 1.2 L11 0.4 Q11.6 -0.1 12.2 0.5 L13.5 1.8 Q14.1 2.4 13.6 3 L12.8 3.8Z" fill="#1f1f1f"/></svg></div>
<div class="b" style="left:784.1999999999999px;top:453.05999999999995px;line-height:0"><svg width="8" height="7.5" viewBox="0 0 16 15"><path d="M0.5 6.5 L8 1 L15.5 6.5 V14.5 H0.5 Z" fill="#22b08f"/><path d="M0.8 7 L8 11.3 L15.2 7" fill="none" stroke="#fff" stroke-width="1.1"/></svg></div>
<div class="b" style="left:796.9599999999999px;top:453.30999999999995px;line-height:0"><svg width="8" height="7" viewBox="0 0 16 14"><ellipse cx="8.5" cy="6" rx="6.4" ry="4.5" fill="none" stroke="#333" stroke-width="1.3"/><path d="M4 9.2 L2.2 12.8 L6.8 10.3" fill="#fff" stroke="#333" stroke-width="1.2"/></svg></div>
<div class="b" style="left:810.2199999999999px;top:455.30999999999995px;line-height:0"><svg width="7" height="3" viewBox="0 0 14 6"><rect x="0.6" y="1.4" width="3.4" height="3.2" fill="#1f1f1f"/><rect x="5.3" y="1.4" width="3.4" height="3.2" fill="#1f1f1f"/><rect x="10" y="1.4" width="3.4" height="3.2" fill="#1f1f1f"/></svg></div>
<div class="b" style="left:67.4px;top:469.78px;width:756.4px;height:26.370000000000005px;background:#ffffff"></div>
<div class="b" style="left:72px;top:479.67999999999995px;width:6px;height:6.0px;background:#fff;border:1px solid #a5a5a5;box-sizing:border-box;border-radius:1px"></div>
<div class="b" style="left:90.9px;top:474.08px"><svg width="15" height="15" viewBox="0 0 30 30"><defs><radialGradient id="bg9j" cx="50%" cy="50%" r="50%"><stop offset="0.35" stop-color="#eef0f1"/><stop offset="1" stop-color="#c0c6c9"/></radialGradient><clipPath id="cp9j"><circle cx="15" cy="15" r="13.8"/></clipPath></defs><circle cx="15" cy="15" r="14" fill="url(#bg9j)"/><g clip-path="url(#cp9j)"><path d="M2 31 Q3 24 10.5 22.5 H19.5 Q27 24 28 31Z" fill="#1c2d4e"/><path d="M12 22.5 L15 28 L18 22.5Z" fill="#e9eef3"/><rect x="12.5" y="18.5" width="5" height="4.5" fill="#b08870"/><ellipse cx="15" cy="14" rx="5.9" ry="7.3" fill="#c29c84"/><path d="M9 12 Q8.6 4.6 15 4.5 Q21.4 4.6 21 12 Q20.2 8.2 15 8 Q9.8 8.2 9 12Z" fill="#2a211c"/></g><circle cx="15" cy="15" r="14" fill="none" stroke="#8ecbd0" stroke-width="1.3"/></svg></div>
<div class="t " style="left:118.30px;top:479.48px;color:#222;font-size:6.71px;letter-spacing:0.000px;transform:scaleX(0.9091);transform-origin:left center">3550</div>
<div class="t " style="left:149.70px;top:479.48px;color:#222;font-size:6.71px;letter-spacing:0.000px;transform:scaleX(0.9091);transform-origin:left center">Feb 8</div>
<div class="t " style="left:190.80px;top:479.48px;color:#2a5f8f;font-size:6.60px;letter-spacing:0.000px;transform:scaleX(0.9091);transform-origin:left center">Jan Karlo Manuel</div>
<div class="t " style="left:255.50px;top:479.48px;color:#222;font-size:6.82px;letter-spacing:0.000px;transform:scaleX(0.9091);transform-origin:left center">Quoter Software Inc.</div>
<div class="t " style="left:329.60px;top:479.48px;color:#222;font-size:6.71px;letter-spacing:0.000px;transform:scaleX(0.9091);transform-origin:left center">Vancouver, BC</div>
<div class="t " style="left:386.40px;top:479.48px;color:#2a5f8f;font-size:6.69px;letter-spacing:0.000px;transform:scaleX(0.9091);transform-origin:left center">Managed Service Proposal Copy - Scott Variant A</div>
<div class="t " style="right:284.90px;top:474.28px;color:#222;font-size:6.71px;letter-spacing:0.000px;transform:scaleX(0.9091);transform-origin:right center">$6,527.96 USD</div>
<div class="t " style="right:284.90px;top:484.58px;color:#c2c2c2;font-size:7.04px;letter-spacing:0.000px;transform:scaleX(0.9091);transform-origin:right center">$2,513.09 (43%)</div>
<div class="t " style="right:228.20px;top:474.28px;color:#222;font-size:6.71px;letter-spacing:0.000px;transform:scaleX(0.9091);transform-origin:right center">$240.80 USD</div>
<div class="t " style="right:228.20px;top:484.58px;color:#c2c2c2;font-size:7.04px;letter-spacing:0.000px;transform:scaleX(0.9091);transform-origin:right center">$157.00 (73%)</div>
<div class="b" style="left:675px;top:477.78px;width:40.799999999999955px;height:10.399999999999977px;background:#ececec;border:1px solid #e0e0e0;box-sizing:border-box;border-radius:1px"></div>
<div class="t " style="left:679.00px;top:479.78px;color:#1a1a1a;font-size:6.00px;letter-spacing:0.000px;transform:scaleX(0.9000);transform-origin:left center">Accepted</div>
<div class="b" style="left:706.7px;top:480.67999999999995px"><svg width="6.6" height="4.2" viewBox="0 0 13 8"><path d="M1.3 1.3 L6.5 6.3 L11.7 1.3" fill="none" stroke="#151515" stroke-width="2"/></svg></div>
<div class="b" style="left:733.9px;top:479.28px;width:8px;height:8px;border:1px solid #aaa;border-radius:50%;box-sizing:border-box;background:#fff"></div>
<div class="b" style="left:756.3px;top:475.58px;width:63.80000000000007px;height:15.099999999999966px;background:#fff;border:1px solid #d6d6d6;box-sizing:border-box;border-radius:1.5px"></div>
<div class="b" style="left:769.06px;top:475.58px;width:0.7000000000000455px;height:15.099999999999966px;background:#dcdcdc"></div>
<div class="b" style="left:781.8199999999999px;top:475.58px;width:0.7000000000000455px;height:15.099999999999966px;background:#dcdcdc"></div>
<div class="b" style="left:794.5799999999999px;top:475.58px;width:0.7000000000000455px;height:15.099999999999966px;background:#dcdcdc"></div>
<div class="b" style="left:807.3399999999999px;top:475.58px;width:0.7000000000000455px;height:15.099999999999966px;background:#dcdcdc"></div>
<div class="b" style="left:759.18px;top:479.67999999999995px;line-height:0"><svg width="7" height="7" viewBox="0 0 14 14"><circle cx="5.6" cy="5.6" r="4.1" fill="none" stroke="#1a1a1a" stroke-width="2.1"/><path d="M8.7 8.7 L12.4 12.4" stroke="#1a1a1a" stroke-width="2.6" stroke-linecap="round"/></svg></div>
<div class="b" style="left:771.9399999999999px;top:479.67999999999995px;line-height:0"><svg width="7" height="7" viewBox="0 0 14 14"><path d="M1.2 12.8 L1.8 9.6 L9.4 2 L12 4.6 L4.4 12.2 Z" fill="#1f1f1f"/><path d="M10.2 1.2 L11 0.4 Q11.6 -0.1 12.2 0.5 L13.5 1.8 Q14.1 2.4 13.6 3 L12.8 3.8Z" fill="#1f1f1f"/></svg></div>
<div class="b" style="left:784.1999999999999px;top:479.42999999999995px;line-height:0"><svg width="8" height="7.5" viewBox="0 0 16 15"><path d="M0.5 6.5 L8 1 L15.5 6.5 V14.5 H0.5 Z" fill="#22b08f"/><path d="M0.8 7 L8 11.3 L15.2 7" fill="none" stroke="#fff" stroke-width="1.1"/></svg></div>
<div class="b" style="left:796.9599999999999px;top:479.67999999999995px;line-height:0"><svg width="8" height="7" viewBox="0 0 16 14"><ellipse cx="8.5" cy="6" rx="6.4" ry="4.5" fill="none" stroke="#333" stroke-width="1.3"/><path d="M4 9.2 L2.2 12.8 L6.8 10.3" fill="#fff" stroke="#333" stroke-width="1.2"/></svg></div>
<div class="b" style="left:810.2199999999999px;top:481.67999999999995px;line-height:0"><svg width="7" height="3" viewBox="0 0 14 6"><rect x="0.6" y="1.4" width="3.4" height="3.2" fill="#1f1f1f"/><rect x="5.3" y="1.4" width="3.4" height="3.2" fill="#1f1f1f"/><rect x="10" y="1.4" width="3.4" height="3.2" fill="#1f1f1f"/></svg></div>
<div class="b" style="left:67.4px;top:496.15px;width:756.4px;height:26.370000000000005px;background:#f6f6f6"></div>
<div class="b" style="left:72px;top:506.04999999999995px;width:6px;height:6.0px;background:#fff;border:1px solid #a5a5a5;box-sizing:border-box;border-radius:1px"></div>
<div class="b" style="left:90.9px;top:500.45px"><svg width="15" height="15" viewBox="0 0 30 30"><defs><radialGradient id="bg10j" cx="50%" cy="50%" r="50%"><stop offset="0.35" stop-color="#eef0f1"/><stop offset="1" stop-color="#c0c6c9"/></radialGradient><clipPath id="cp10j"><circle cx="15" cy="15" r="13.8"/></clipPath></defs><circle cx="15" cy="15" r="14" fill="url(#bg10j)"/><g clip-path="url(#cp10j)"><path d="M2 31 Q3 24 10.5 22.5 H19.5 Q27 24 28 31Z" fill="#1c2d4e"/><path d="M12 22.5 L15 28 L18 22.5Z" fill="#e9eef3"/><rect x="12.5" y="18.5" width="5" height="4.5" fill="#b08870"/><ellipse cx="15" cy="14" rx="5.9" ry="7.3" fill="#c29c84"/><path d="M9 12 Q8.6 4.6 15 4.5 Q21.4 4.6 21 12 Q20.2 8.2 15 8 Q9.8 8.2 9 12Z" fill="#2a211c"/></g><circle cx="15" cy="15" r="14" fill="none" stroke="#8ecbd0" stroke-width="1.3"/></svg></div>
<div class="t " style="left:118.30px;top:505.85px;color:#222;font-size:6.71px;letter-spacing:0.000px;transform:scaleX(0.9091);transform-origin:left center">3549</div>
<div class="t " style="left:149.70px;top:505.85px;color:#222;font-size:6.71px;letter-spacing:0.000px;transform:scaleX(0.9091);transform-origin:left center">Feb 8</div>
<div class="t " style="left:190.80px;top:505.85px;color:#2a5f8f;font-size:6.60px;letter-spacing:0.000px;transform:scaleX(0.9091);transform-origin:left center">Jan Karlo Manuel</div>
<div class="t " style="left:255.50px;top:505.85px;color:#222;font-size:6.82px;letter-spacing:0.000px;transform:scaleX(0.9091);transform-origin:left center">Quoter Software Inc.</div>
<div class="t " style="left:329.60px;top:505.85px;color:#222;font-size:6.71px;letter-spacing:0.000px;transform:scaleX(0.9091);transform-origin:left center">Vancouver, BC</div>
<div class="t " style="left:386.40px;top:505.85px;color:#2a5f8f;font-size:6.69px;letter-spacing:0.000px;transform:scaleX(0.9091);transform-origin:left center">Managed Service Proposal Copy - Scott Variant A</div>
<div class="t " style="right:284.90px;top:500.65px;color:#222;font-size:6.71px;letter-spacing:0.000px;transform:scaleX(0.9091);transform-origin:right center">$6,527.96 USD</div>
<div class="t " style="right:284.90px;top:510.95px;color:#c2c2c2;font-size:7.04px;letter-spacing:0.000px;transform:scaleX(0.9091);transform-origin:right center">$2,513.09 (43%)</div>
<div class="t " style="right:228.20px;top:500.65px;color:#222;font-size:6.71px;letter-spacing:0.000px;transform:scaleX(0.9091);transform-origin:right center">$240.80 USD</div>
<div class="t " style="right:228.20px;top:510.95px;color:#c2c2c2;font-size:7.04px;letter-spacing:0.000px;transform:scaleX(0.9091);transform-origin:right center">$157.00 (73%)</div>
<div class="b" style="left:675px;top:504.15px;width:40.799999999999955px;height:10.399999999999977px;background:#ececec;border:1px solid #e0e0e0;box-sizing:border-box;border-radius:1px"></div>
<div class="t " style="left:679.00px;top:506.15px;color:#1a1a1a;font-size:6.00px;letter-spacing:0.000px;transform:scaleX(0.9000);transform-origin:left center">Accepted</div>
<div class="b" style="left:706.7px;top:507.04999999999995px"><svg width="6.6" height="4.2" viewBox="0 0 13 8"><path d="M1.3 1.3 L6.5 6.3 L11.7 1.3" fill="none" stroke="#151515" stroke-width="2"/></svg></div>
<div class="b" style="left:733.9px;top:505.65px;width:8px;height:8px;border:1px solid #aaa;border-radius:50%;box-sizing:border-box;background:#fff"></div>
<div class="b" style="left:756.3px;top:501.95px;width:63.80000000000007px;height:15.099999999999966px;background:#fff;border:1px solid #d6d6d6;box-sizing:border-box;border-radius:1.5px"></div>
<div class="b" style="left:769.06px;top:501.95px;width:0.7000000000000455px;height:15.099999999999966px;background:#dcdcdc"></div>
<div class="b" style="left:781.8199999999999px;top:501.95px;width:0.7000000000000455px;height:15.099999999999966px;background:#dcdcdc"></div>
<div class="b" style="left:794.5799999999999px;top:501.95px;width:0.7000000000000455px;height:15.099999999999966px;background:#dcdcdc"></div>
<div class="b" style="left:807.3399999999999px;top:501.95px;width:0.7000000000000455px;height:15.099999999999966px;background:#dcdcdc"></div>
<div class="b" style="left:759.18px;top:506.04999999999995px;line-height:0"><svg width="7" height="7" viewBox="0 0 14 14"><circle cx="5.6" cy="5.6" r="4.1" fill="none" stroke="#1a1a1a" stroke-width="2.1"/><path d="M8.7 8.7 L12.4 12.4" stroke="#1a1a1a" stroke-width="2.6" stroke-linecap="round"/></svg></div>
<div class="b" style="left:771.9399999999999px;top:506.04999999999995px;line-height:0"><svg width="7" height="7" viewBox="0 0 14 14"><path d="M1.2 12.8 L1.8 9.6 L9.4 2 L12 4.6 L4.4 12.2 Z" fill="#1f1f1f"/><path d="M10.2 1.2 L11 0.4 Q11.6 -0.1 12.2 0.5 L13.5 1.8 Q14.1 2.4 13.6 3 L12.8 3.8Z" fill="#1f1f1f"/></svg></div>
<div class="b" style="left:784.1999999999999px;top:505.79999999999995px;line-height:0"><svg width="8" height="7.5" viewBox="0 0 16 15"><path d="M0.5 6.5 L8 1 L15.5 6.5 V14.5 H0.5 Z" fill="#22b08f"/><path d="M0.8 7 L8 11.3 L15.2 7" fill="none" stroke="#fff" stroke-width="1.1"/></svg></div>
<div class="b" style="left:796.9599999999999px;top:506.04999999999995px;line-height:0"><svg width="8" height="7" viewBox="0 0 16 14"><ellipse cx="8.5" cy="6" rx="6.4" ry="4.5" fill="none" stroke="#333" stroke-width="1.3"/><path d="M4 9.2 L2.2 12.8 L6.8 10.3" fill="#fff" stroke="#333" stroke-width="1.2"/></svg></div>
<div class="b" style="left:810.2199999999999px;top:508.04999999999995px;line-height:0"><svg width="7" height="3" viewBox="0 0 14 6"><rect x="0.6" y="1.4" width="3.4" height="3.2" fill="#1f1f1f"/><rect x="5.3" y="1.4" width="3.4" height="3.2" fill="#1f1f1f"/><rect x="10" y="1.4" width="3.4" height="3.2" fill="#1f1f1f"/></svg></div>
</div>
</body></html>
